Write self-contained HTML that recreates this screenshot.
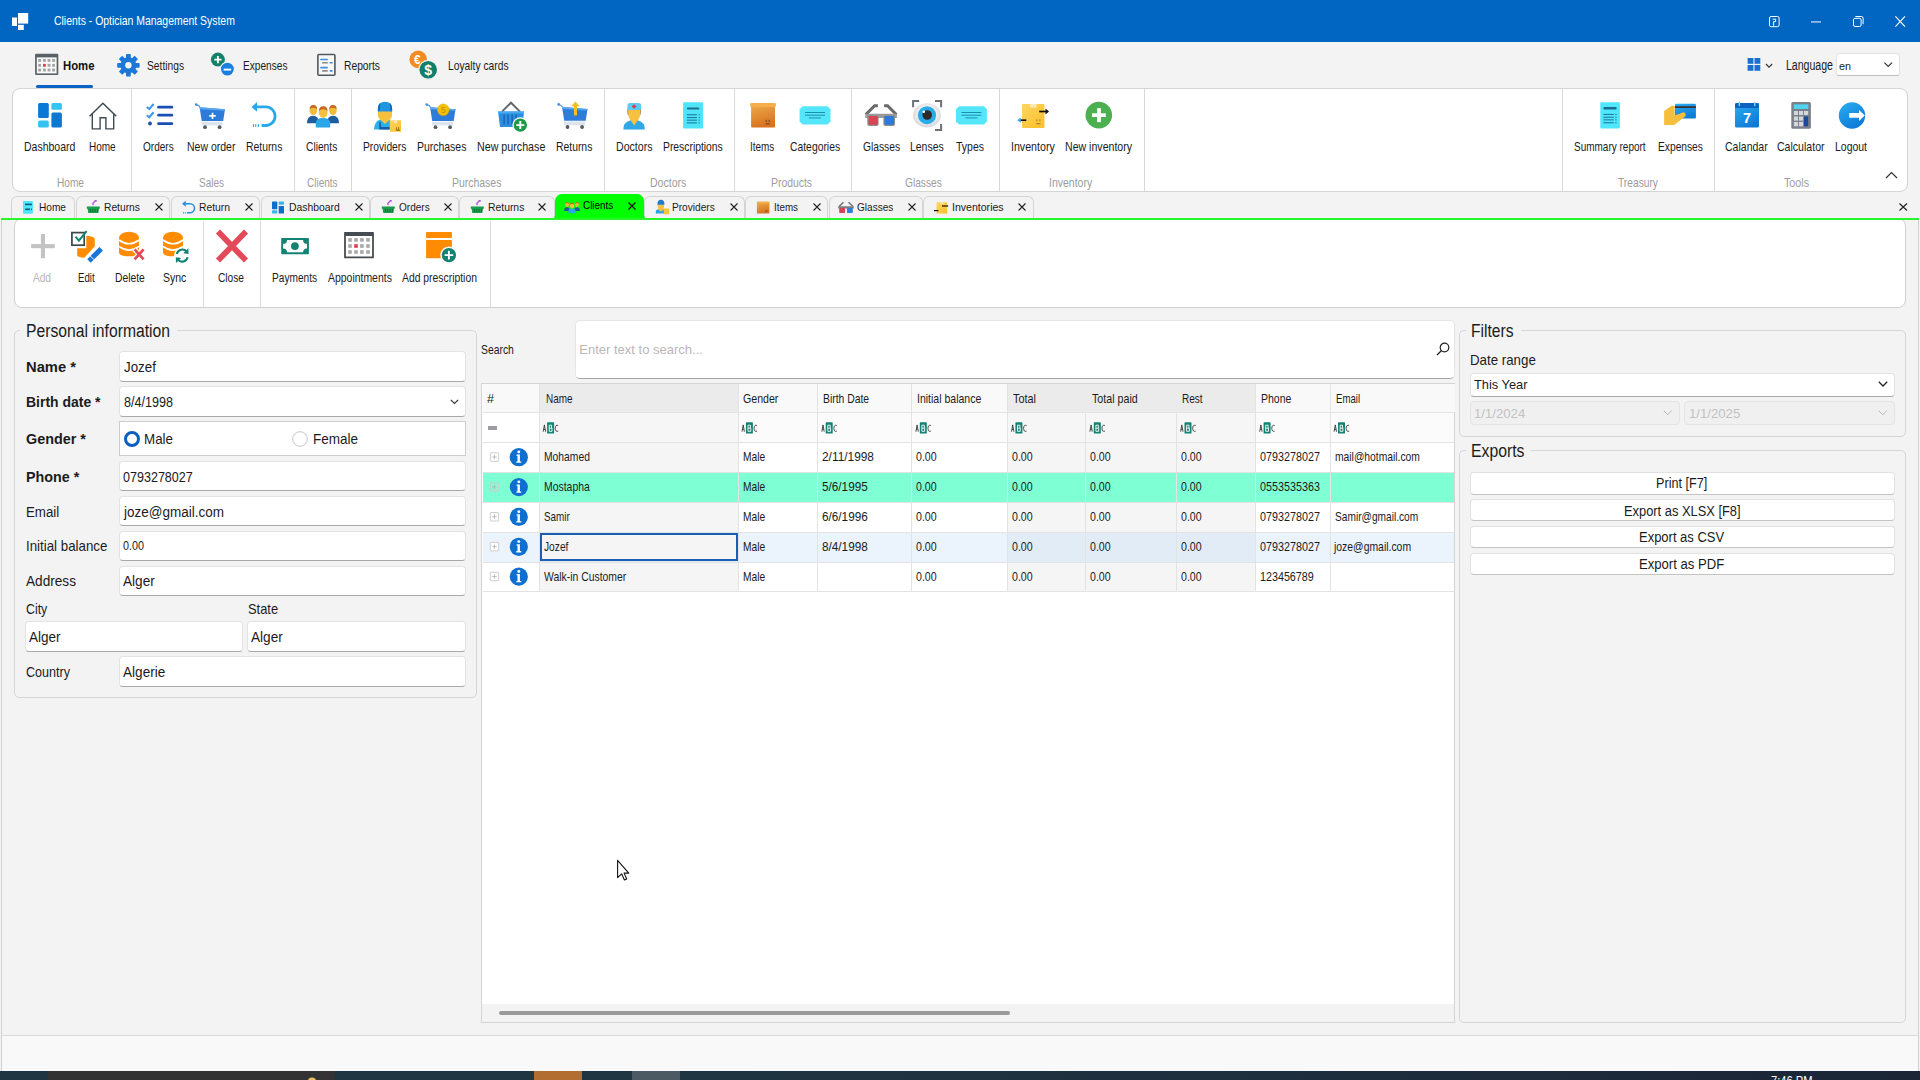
<!DOCTYPE html>
<html><head><meta charset="utf-8"><title>Clients - Optician Management System</title>
<style>
html,body{margin:0;padding:0;width:1920px;height:1080px;overflow:hidden;background:#f3f3f3;font-family:"Liberation Sans",sans-serif}
.t{position:absolute;white-space:nowrap;transform-origin:0 0}
.r{position:absolute;box-sizing:border-box}
svg.r{overflow:visible}
</style></head><body>
<div class="r" style="left:0.00px;top:0.00px;width:1920.00px;height:42.00px;background:#0066c2"></div>
<svg class="r" style="left:12.00px;top:13.00px" width="17" height="17" viewBox="0 0 17 17"><rect x="6" y="0" width="10.2" height="10.6" fill="#fff"/><rect x="0" y="4.5" width="5" height="8.5" fill="#fff"/><rect x="6" y="11.8" width="5.8" height="5.2" fill="#fff"/></svg>
<div class="t" style="left:53.50px;top:14.27px;font-size:13.50px;line-height:13.50px;color:#ffffff;transform:scaleX(0.7724)">Clients - Optician Management System</div>
<svg class="r" style="left:1769.00px;top:16.00px" width="11" height="11" viewBox="0 0 11 11"><rect x="0.5" y="0.5" width="9.6" height="10.2" rx="1.6" fill="none" stroke="#fff" stroke-width="1"/><path d="M3.6 3.2 H6.6 V5.6 H4.6 V9.8" fill="none" stroke="#fff" stroke-width="1"/></svg>
<svg class="r" style="left:1811.00px;top:21.00px" width="11" height="2" viewBox="0 0 11 2"><rect x="0" y="0.4" width="10" height="1.1" fill="#e8eef8"/></svg>
<svg class="r" style="left:1853.00px;top:16.00px" width="11" height="11" viewBox="0 0 11 11"><rect x="0.5" y="2.3" width="7.6" height="8.2" rx="1.5" fill="none" stroke="#fff"/><path d="M2.4 0.5 H8.5 a1.6 1.6 0 0 1 1.6 1.6 V8.2" fill="none" stroke="#fff"/></svg>
<svg class="r" style="left:1895.00px;top:16.00px" width="11" height="11" viewBox="0 0 11 11"><path d="M0.4 0.4 L10 10.6 M10 0.4 L0.4 10.6" stroke="#fff" stroke-width="1.1"/></svg>
<div class="r" style="left:0.00px;top:42.00px;width:1920.00px;height:46.00px;background:#f3f3f3"></div>
<div class="r" style="left:36.00px;top:85.00px;width:57.00px;height:3.00px;background:#0a63c4;border-radius:2px"></div>
<div class="t" style="left:62.50px;top:58.57px;font-size:13.50px;line-height:13.50px;color:#111111;font-weight:bold;transform:scaleX(0.8393)">Home</div>
<div class="t" style="left:147.00px;top:58.57px;font-size:13.50px;line-height:13.50px;color:#1b1b1b;transform:scaleX(0.7592)">Settings</div>
<div class="t" style="left:242.50px;top:58.57px;font-size:13.50px;line-height:13.50px;color:#1b1b1b;transform:scaleX(0.7509)">Expenses</div>
<div class="t" style="left:344.00px;top:58.57px;font-size:13.50px;line-height:13.50px;color:#1b1b1b;transform:scaleX(0.7619)">Reports</div>
<div class="t" style="left:447.50px;top:58.57px;font-size:13.50px;line-height:13.50px;color:#1b1b1b;transform:scaleX(0.7609)">Loyalty cards</div>
<div class="t" style="left:1786.00px;top:57.75px;font-size:14.00px;line-height:14.00px;color:#1b1b1b;transform:scaleX(0.7544)">Language</div>
<div class="r" style="left:1836.00px;top:53.00px;width:64.00px;height:23.00px;background:#ffffff;border:1px solid #e2e2e2;border-radius:3px;border-bottom-color:#bdbdbd"></div>
<div class="t" style="left:1839.00px;top:60.71px;font-size:10.50px;line-height:10.50px;color:#1b1b1b;transform:scaleX(1.0296)">en</div>
<div class="r" style="left:12.00px;top:88.00px;width:1896.00px;height:104.00px;background:#ffffff;border:1px solid #d4d4d4;border-radius:8px"></div>
<div class="r" style="left:130.80px;top:89.00px;width:1.00px;height:102.00px;background:#d9d9d9"></div>
<div class="r" style="left:294.00px;top:89.00px;width:1.00px;height:102.00px;background:#d9d9d9"></div>
<div class="r" style="left:350.80px;top:89.00px;width:1.00px;height:102.00px;background:#d9d9d9"></div>
<div class="r" style="left:604.00px;top:89.00px;width:1.00px;height:102.00px;background:#d9d9d9"></div>
<div class="r" style="left:734.20px;top:89.00px;width:1.00px;height:102.00px;background:#d9d9d9"></div>
<div class="r" style="left:851.00px;top:89.00px;width:1.00px;height:102.00px;background:#d9d9d9"></div>
<div class="r" style="left:998.60px;top:89.00px;width:1.00px;height:102.00px;background:#d9d9d9"></div>
<div class="r" style="left:1143.80px;top:89.00px;width:1.00px;height:102.00px;background:#d9d9d9"></div>
<div class="r" style="left:1562.00px;top:89.00px;width:1.00px;height:102.00px;background:#d9d9d9"></div>
<div class="r" style="left:1714.00px;top:89.00px;width:1.00px;height:102.00px;background:#d9d9d9"></div>
<div class="t" style="left:24.00px;top:140.00px;font-size:13.00px;line-height:13.00px;color:#1b1b1b;transform:scaleX(0.8070)">Dashboard</div>
<div class="t" style="left:89.30px;top:140.00px;font-size:13.00px;line-height:13.00px;color:#1b1b1b;transform:scaleX(0.7692)">Home</div>
<div class="t" style="left:143.30px;top:140.00px;font-size:13.00px;line-height:13.00px;color:#1b1b1b;transform:scaleX(0.7717)">Orders</div>
<div class="t" style="left:187.30px;top:140.00px;font-size:13.00px;line-height:13.00px;color:#1b1b1b;transform:scaleX(0.8076)">New order</div>
<div class="t" style="left:246.00px;top:140.00px;font-size:13.00px;line-height:13.00px;color:#1b1b1b;transform:scaleX(0.7978)">Returns</div>
<div class="t" style="left:306.00px;top:140.00px;font-size:13.00px;line-height:13.00px;color:#1b1b1b;transform:scaleX(0.7868)">Clients</div>
<div class="t" style="left:362.70px;top:140.00px;font-size:13.00px;line-height:13.00px;color:#1b1b1b;transform:scaleX(0.7893)">Providers</div>
<div class="t" style="left:416.70px;top:140.00px;font-size:13.00px;line-height:13.00px;color:#1b1b1b;transform:scaleX(0.8035)">Purchases</div>
<div class="t" style="left:476.70px;top:140.00px;font-size:13.00px;line-height:13.00px;color:#1b1b1b;transform:scaleX(0.8222)">New purchase</div>
<div class="t" style="left:556.00px;top:140.00px;font-size:13.00px;line-height:13.00px;color:#1b1b1b;transform:scaleX(0.7978)">Returns</div>
<div class="t" style="left:616.00px;top:140.00px;font-size:13.00px;line-height:13.00px;color:#1b1b1b;transform:scaleX(0.8138)">Doctors</div>
<div class="t" style="left:662.70px;top:140.00px;font-size:13.00px;line-height:13.00px;color:#1b1b1b;transform:scaleX(0.7958)">Prescriptions</div>
<div class="t" style="left:750.20px;top:140.00px;font-size:13.00px;line-height:13.00px;color:#1b1b1b;transform:scaleX(0.7629)">Items</div>
<div class="t" style="left:789.60px;top:140.00px;font-size:13.00px;line-height:13.00px;color:#1b1b1b;transform:scaleX(0.7970)">Categories</div>
<div class="t" style="left:862.50px;top:140.00px;font-size:13.00px;line-height:13.00px;color:#1b1b1b;transform:scaleX(0.7884)">Glasses</div>
<div class="t" style="left:910.00px;top:140.00px;font-size:13.00px;line-height:13.00px;color:#1b1b1b;transform:scaleX(0.8027)">Lenses</div>
<div class="t" style="left:956.40px;top:140.00px;font-size:13.00px;line-height:13.00px;color:#1b1b1b;transform:scaleX(0.8067)">Types</div>
<div class="t" style="left:1010.70px;top:140.00px;font-size:13.00px;line-height:13.00px;color:#1b1b1b;transform:scaleX(0.8179)">Inventory</div>
<div class="t" style="left:1065.20px;top:140.00px;font-size:13.00px;line-height:13.00px;color:#1b1b1b;transform:scaleX(0.8141)">New inventory</div>
<div class="t" style="left:1574.40px;top:140.00px;font-size:13.00px;line-height:13.00px;color:#1b1b1b;transform:scaleX(0.7682)">Summary report</div>
<div class="t" style="left:1657.50px;top:140.00px;font-size:13.00px;line-height:13.00px;color:#1b1b1b;transform:scaleX(0.7868)">Expenses</div>
<div class="t" style="left:1725.30px;top:140.00px;font-size:13.00px;line-height:13.00px;color:#1b1b1b;transform:scaleX(0.8090)">Calandar</div>
<div class="t" style="left:1777.40px;top:140.00px;font-size:13.00px;line-height:13.00px;color:#1b1b1b;transform:scaleX(0.8120)">Calculator</div>
<div class="t" style="left:1835.00px;top:140.00px;font-size:13.00px;line-height:13.00px;color:#1b1b1b;transform:scaleX(0.8044)">Logout</div>
<div class="t" style="left:57.30px;top:175.80px;font-size:13.00px;line-height:13.00px;color:#9d9d9d;transform:scaleX(0.7779)">Home</div>
<div class="t" style="left:199.30px;top:175.80px;font-size:13.00px;line-height:13.00px;color:#9d9d9d;transform:scaleX(0.7692)">Sales</div>
<div class="t" style="left:306.70px;top:175.80px;font-size:13.00px;line-height:13.00px;color:#9d9d9d;transform:scaleX(0.7692)">Clients</div>
<div class="t" style="left:452.00px;top:175.80px;font-size:13.00px;line-height:13.00px;color:#9d9d9d;transform:scaleX(0.8035)">Purchases</div>
<div class="t" style="left:650.20px;top:175.80px;font-size:13.00px;line-height:13.00px;color:#9d9d9d;transform:scaleX(0.8116)">Doctors</div>
<div class="t" style="left:771.20px;top:175.80px;font-size:13.00px;line-height:13.00px;color:#9d9d9d;transform:scaleX(0.8004)">Products</div>
<div class="t" style="left:905.40px;top:175.80px;font-size:13.00px;line-height:13.00px;color:#9d9d9d;transform:scaleX(0.7820)">Glasses</div>
<div class="t" style="left:1049.20px;top:175.80px;font-size:13.00px;line-height:13.00px;color:#9d9d9d;transform:scaleX(0.8067)">Inventory</div>
<div class="t" style="left:1617.50px;top:175.80px;font-size:13.00px;line-height:13.00px;color:#9d9d9d;transform:scaleX(0.7869)">Treasury</div>
<div class="t" style="left:1784.00px;top:175.80px;font-size:13.00px;line-height:13.00px;color:#9d9d9d;transform:scaleX(0.8254)">Tools</div>
<svg class="r" style="left:1885.00px;top:171.00px" width="13" height="8" viewBox="0 0 13 8"><path d="M1 7 L6.5 1.5 L12 7" fill="none" stroke="#333" stroke-width="1.2"/></svg>
<div class="r" style="left:0.00px;top:192.00px;width:1920.00px;height:26.00px;background:#f3f3f3"></div>
<div class="r" style="left:10.70px;top:196.00px;width:64.70px;height:23.00px;background:#f3f3f3;border:1px solid #d4d4d4;border-radius:6px 6px 0 0;border-bottom:none"></div>
<div class="t" style="left:39.00px;top:201.57px;font-size:11.50px;line-height:11.50px;color:#1b1b1b;transform:scaleX(0.8793)">Home</div>
<div class="r" style="left:76.00px;top:196.00px;width:94.30px;height:23.00px;background:#f3f3f3;border:1px solid #d4d4d4;border-radius:6px 6px 0 0;border-bottom:none"></div>
<div class="t" style="left:104.40px;top:201.57px;font-size:11.50px;line-height:11.50px;color:#1b1b1b;transform:scaleX(0.8919)">Returns</div>
<svg class="r" style="left:154.70px;top:202.50px" width="8" height="8" viewBox="0 0 8 8"><path d="M0.5 0.5 L7.5 7.5 M7.5 0.5 L0.5 7.5" stroke="#222" stroke-width="1.1"/></svg>
<div class="r" style="left:171.00px;top:196.00px;width:89.30px;height:23.00px;background:#f3f3f3;border:1px solid #d4d4d4;border-radius:6px 6px 0 0;border-bottom:none"></div>
<div class="t" style="left:199.30px;top:201.57px;font-size:11.50px;line-height:11.50px;color:#1b1b1b;transform:scaleX(0.8971)">Return</div>
<svg class="r" style="left:244.70px;top:202.50px" width="8" height="8" viewBox="0 0 8 8"><path d="M0.5 0.5 L7.5 7.5 M7.5 0.5 L0.5 7.5" stroke="#222" stroke-width="1.1"/></svg>
<div class="r" style="left:261.00px;top:196.00px;width:109.00px;height:23.00px;background:#f3f3f3;border:1px solid #d4d4d4;border-radius:6px 6px 0 0;border-bottom:none"></div>
<div class="t" style="left:289.30px;top:201.57px;font-size:11.50px;line-height:11.50px;color:#1b1b1b;transform:scaleX(0.9016)">Dashboard</div>
<svg class="r" style="left:354.60px;top:202.50px" width="8" height="8" viewBox="0 0 8 8"><path d="M0.5 0.5 L7.5 7.5 M7.5 0.5 L0.5 7.5" stroke="#222" stroke-width="1.1"/></svg>
<div class="r" style="left:370.00px;top:196.00px;width:89.00px;height:23.00px;background:#f3f3f3;border:1px solid #d4d4d4;border-radius:6px 6px 0 0;border-bottom:none"></div>
<div class="t" style="left:398.70px;top:201.57px;font-size:11.50px;line-height:11.50px;color:#1b1b1b;transform:scaleX(0.8724)">Orders</div>
<svg class="r" style="left:443.70px;top:202.50px" width="8" height="8" viewBox="0 0 8 8"><path d="M0.5 0.5 L7.5 7.5 M7.5 0.5 L0.5 7.5" stroke="#222" stroke-width="1.1"/></svg>
<div class="r" style="left:459.00px;top:196.00px;width:95.70px;height:23.00px;background:#f3f3f3;border:1px solid #d4d4d4;border-radius:6px 6px 0 0;border-bottom:none"></div>
<div class="t" style="left:488.00px;top:201.57px;font-size:11.50px;line-height:11.50px;color:#1b1b1b;transform:scaleX(0.9019)">Returns</div>
<svg class="r" style="left:538.40px;top:202.50px" width="8" height="8" viewBox="0 0 8 8"><path d="M0.5 0.5 L7.5 7.5 M7.5 0.5 L0.5 7.5" stroke="#222" stroke-width="1.1"/></svg>
<div class="r" style="left:643.75px;top:196.00px;width:101.45px;height:23.00px;background:#f3f3f3;border:1px solid #d4d4d4;border-radius:6px 6px 0 0;border-bottom:none"></div>
<div class="t" style="left:672.30px;top:201.57px;font-size:11.50px;line-height:11.50px;color:#1b1b1b;transform:scaleX(0.8799)">Providers</div>
<svg class="r" style="left:729.60px;top:202.50px" width="8" height="8" viewBox="0 0 8 8"><path d="M0.5 0.5 L7.5 7.5 M7.5 0.5 L0.5 7.5" stroke="#222" stroke-width="1.1"/></svg>
<div class="r" style="left:745.20px;top:196.00px;width:83.30px;height:23.00px;background:#f3f3f3;border:1px solid #d4d4d4;border-radius:6px 6px 0 0;border-bottom:none"></div>
<div class="t" style="left:774.40px;top:201.57px;font-size:11.50px;line-height:11.50px;color:#1b1b1b;transform:scaleX(0.8517)">Items</div>
<svg class="r" style="left:812.50px;top:202.50px" width="8" height="8" viewBox="0 0 8 8"><path d="M0.5 0.5 L7.5 7.5 M7.5 0.5 L0.5 7.5" stroke="#222" stroke-width="1.1"/></svg>
<div class="r" style="left:828.50px;top:196.00px;width:94.80px;height:23.00px;background:#f3f3f3;border:1px solid #d4d4d4;border-radius:6px 6px 0 0;border-bottom:none"></div>
<div class="t" style="left:856.70px;top:201.57px;font-size:11.50px;line-height:11.50px;color:#1b1b1b;transform:scaleX(0.8744)">Glasses</div>
<svg class="r" style="left:907.70px;top:202.50px" width="8" height="8" viewBox="0 0 8 8"><path d="M0.5 0.5 L7.5 7.5 M7.5 0.5 L0.5 7.5" stroke="#222" stroke-width="1.1"/></svg>
<div class="r" style="left:923.30px;top:196.00px;width:110.45px;height:23.00px;background:#f3f3f3;border:1px solid #d4d4d4;border-radius:6px 6px 0 0;border-bottom:none"></div>
<div class="t" style="left:951.90px;top:201.57px;font-size:11.50px;line-height:11.50px;color:#1b1b1b;transform:scaleX(0.9176)">Inventories</div>
<svg class="r" style="left:1017.50px;top:202.50px" width="8" height="8" viewBox="0 0 8 8"><path d="M0.5 0.5 L7.5 7.5 M7.5 0.5 L0.5 7.5" stroke="#222" stroke-width="1.1"/></svg>
<div class="r" style="left:555.00px;top:193.50px;width:89.00px;height:25.50px;background:#00ff00;border-radius:7px 7px 0 0"></div>
<svg class="r" style="left:550.00px;top:213.00px" width="100" height="7" viewBox="0 0 100 7"><path d="M0 6.5 Q5 6.5 5 1.5 V6.5 Z M99.5 6.5 Q94 6.5 94 1.5 V6.5 Z" fill="#00ff00"/></svg>
<div class="t" style="left:583.00px;top:200.47px;font-size:11.50px;line-height:11.50px;color:#000000;transform:scaleX(0.8582)">Clients</div>
<svg class="r" style="left:627.80px;top:201.50px" width="8" height="8" viewBox="0 0 8 8"><path d="M0.5 0.5 L7.5 7.5 M7.5 0.5 L0.5 7.5" stroke="#111" stroke-width="1.3"/></svg>
<svg class="r" style="left:1899.00px;top:202.50px" width="9" height="8" viewBox="0 0 9 8"><path d="M0.5 0.5 L8 7.5 M8 0.5 L0.5 7.5" stroke="#222" stroke-width="1.2"/></svg>
<div class="r" style="left:0.00px;top:220.00px;width:1920.00px;height:851.00px;background:#f3f3f3"></div>
<div class="r" style="left:1.00px;top:220.00px;width:1.00px;height:851.00px;background:#d0d0d0"></div>
<div class="r" style="left:1918.00px;top:220.00px;width:1.00px;height:851.00px;background:#d0d0d0"></div>
<div class="r" style="left:14.00px;top:218.00px;width:1892.00px;height:90.00px;background:#ffffff;border:1px solid #d0d0d0;border-radius:8px"></div>
<div class="r" style="left:1.00px;top:217.80px;width:1918.00px;height:1.90px;background:#2af52a"></div>
<div class="r" style="left:203.00px;top:221.00px;width:1.00px;height:86.00px;background:#d9d9d9"></div>
<div class="r" style="left:260.00px;top:221.00px;width:1.00px;height:86.00px;background:#d9d9d9"></div>
<div class="r" style="left:489.50px;top:221.00px;width:1.00px;height:86.00px;background:#d9d9d9"></div>
<div class="t" style="left:33.20px;top:271.40px;font-size:13.00px;line-height:13.00px;color:#b5b5b5;transform:scaleX(0.7779)">Add</div>
<div class="t" style="left:78.30px;top:271.40px;font-size:13.00px;line-height:13.00px;color:#1b1b1b;transform:scaleX(0.7426)">Edit</div>
<div class="t" style="left:115.40px;top:271.40px;font-size:13.00px;line-height:13.00px;color:#1b1b1b;transform:scaleX(0.7932)">Delete</div>
<div class="t" style="left:163.20px;top:271.40px;font-size:13.00px;line-height:13.00px;color:#1b1b1b;transform:scaleX(0.8073)">Sync</div>
<div class="t" style="left:218.40px;top:271.40px;font-size:13.00px;line-height:13.00px;color:#1b1b1b;transform:scaleX(0.7812)">Close</div>
<div class="t" style="left:272.10px;top:271.40px;font-size:13.00px;line-height:13.00px;color:#1b1b1b;transform:scaleX(0.7796)">Payments</div>
<div class="t" style="left:327.60px;top:271.40px;font-size:13.00px;line-height:13.00px;color:#1b1b1b;transform:scaleX(0.8032)">Appointments</div>
<div class="t" style="left:402.30px;top:271.40px;font-size:13.00px;line-height:13.00px;color:#1b1b1b;transform:scaleX(0.7980)">Add prescription</div>
<div class="r" style="left:14.00px;top:330.00px;width:463.00px;height:368.00px;background:transparent;border:1px solid #d6d6d6;border-radius:5px"></div>
<div class="r" style="left:20.00px;top:322.00px;width:157.00px;height:18.00px;background:#f3f3f3"></div>
<div class="t" style="left:26.25px;top:321.66px;font-size:18.00px;line-height:18.00px;color:#1b1b1b;transform:scaleX(0.8724)">Personal information</div>
<div class="r" style="left:119.00px;top:351.00px;width:347.00px;height:31.00px;background:#ffffff;border:1px solid #e3e3e3;border-radius:4px;border-bottom:1.5px solid #a9a9a9"></div>
<div class="r" style="left:119.00px;top:386.00px;width:347.00px;height:31.00px;background:#ffffff;border:1px solid #e3e3e3;border-radius:4px;border-bottom:1.5px solid #a9a9a9"></div>
<div class="r" style="left:119.00px;top:421.00px;width:347.00px;height:35.00px;background:#ffffff;border:1px solid #cdcdcd"></div>
<div class="r" style="left:119.00px;top:461.00px;width:347.00px;height:30.00px;background:#ffffff;border:1px solid #e3e3e3;border-radius:4px;border-bottom:1.5px solid #a9a9a9"></div>
<div class="r" style="left:119.00px;top:496.00px;width:347.00px;height:30.00px;background:#ffffff;border:1px solid #e3e3e3;border-radius:4px;border-bottom:1.5px solid #a9a9a9"></div>
<div class="r" style="left:119.00px;top:531.00px;width:347.00px;height:30.00px;background:#ffffff;border:1px solid #e3e3e3;border-radius:4px;border-bottom:1.5px solid #a9a9a9"></div>
<div class="r" style="left:119.00px;top:566.00px;width:347.00px;height:30.00px;background:#ffffff;border:1px solid #e3e3e3;border-radius:4px;border-bottom:1.5px solid #a9a9a9"></div>
<div class="r" style="left:25.00px;top:621.00px;width:218.00px;height:31.00px;background:#ffffff;border:1px solid #e3e3e3;border-radius:4px;border-bottom:1.5px solid #a9a9a9"></div>
<div class="r" style="left:247.00px;top:621.00px;width:219.00px;height:31.00px;background:#ffffff;border:1px solid #e3e3e3;border-radius:4px;border-bottom:1.5px solid #a9a9a9"></div>
<div class="r" style="left:119.00px;top:656.00px;width:347.00px;height:31.00px;background:#ffffff;border:1px solid #e3e3e3;border-radius:4px;border-bottom:1.5px solid #a9a9a9"></div>
<div class="t" style="left:25.60px;top:358.78px;font-size:15.50px;line-height:15.50px;color:#1b1b1b;font-weight:bold;transform:scaleX(0.9516)">Name *</div>
<div class="t" style="left:25.60px;top:393.78px;font-size:15.50px;line-height:15.50px;color:#1b1b1b;font-weight:bold;transform:scaleX(0.9006)">Birth date *</div>
<div class="t" style="left:25.50px;top:431.00px;font-size:15.00px;line-height:15.00px;color:#1b1b1b;font-weight:bold;transform:scaleX(0.9592)">Gender *</div>
<div class="t" style="left:25.50px;top:468.80px;font-size:15.00px;line-height:15.00px;color:#1b1b1b;font-weight:bold;transform:scaleX(0.9543)">Phone *</div>
<div class="t" style="left:25.50px;top:503.63px;font-size:15.50px;line-height:15.50px;color:#1b1b1b;transform:scaleX(0.8581)">Email</div>
<div class="t" style="left:25.50px;top:538.98px;font-size:14.50px;line-height:14.50px;color:#1b1b1b;transform:scaleX(0.9171)">Initial balance</div>
<div class="t" style="left:25.50px;top:573.98px;font-size:14.50px;line-height:14.50px;color:#1b1b1b;transform:scaleX(0.9396)">Address</div>
<div class="t" style="left:25.50px;top:602.23px;font-size:14.50px;line-height:14.50px;color:#1b1b1b;transform:scaleX(0.8520)">City</div>
<div class="t" style="left:247.50px;top:602.23px;font-size:14.50px;line-height:14.50px;color:#1b1b1b;transform:scaleX(0.8880)">State</div>
<div class="t" style="left:25.50px;top:664.73px;font-size:14.50px;line-height:14.50px;color:#1b1b1b;transform:scaleX(0.8670)">Country</div>
<div class="t" style="left:123.75px;top:358.78px;font-size:15.50px;line-height:15.50px;color:#1b1b1b;transform:scaleX(0.8598)">Jozef</div>
<div class="t" style="left:123.50px;top:393.78px;font-size:15.50px;line-height:15.50px;color:#1b1b1b;transform:scaleX(0.8127)">8/4/1998</div>
<svg class="r" style="left:450.00px;top:398.50px" width="9" height="6" viewBox="0 0 9 6"><path d="M0.8 0.8 L4.5 4.5 L8.2 0.8" fill="none" stroke="#333" stroke-width="1.2"/></svg>
<div class="t" style="left:144.25px;top:431.00px;font-size:15.00px;line-height:15.00px;color:#1b1b1b;transform:scaleX(0.8909)">Male</div>
<div class="t" style="left:312.50px;top:431.00px;font-size:15.00px;line-height:15.00px;color:#1b1b1b;transform:scaleX(0.9009)">Female</div>
<svg class="r" style="left:124.00px;top:431.00px" width="16" height="16" viewBox="0 0 16 16"><circle cx="8" cy="8" r="6.5" fill="#fff" stroke="#0a5fc2" stroke-width="3"/></svg>
<svg class="r" style="left:292.00px;top:431.00px" width="16" height="16" viewBox="0 0 16 16"><circle cx="8" cy="8" r="7.3" fill="#fff" stroke="#c8c8c8" stroke-width="1"/></svg>
<div class="t" style="left:123.25px;top:468.80px;font-size:15.00px;line-height:15.00px;color:#1b1b1b;transform:scaleX(0.8363)">0793278027</div>
<div class="t" style="left:123.66px;top:503.63px;font-size:15.50px;line-height:15.50px;color:#1b1b1b;transform:scaleX(0.8715)">joze@gmail.com</div>
<div class="t" style="left:123.25px;top:539.32px;font-size:13.50px;line-height:13.50px;color:#1b1b1b;transform:scaleX(0.7977)">0.00</div>
<div class="t" style="left:123.25px;top:573.98px;font-size:14.50px;line-height:14.50px;color:#1b1b1b;transform:scaleX(0.9398)">Alger</div>
<div class="t" style="left:29.25px;top:629.73px;font-size:14.50px;line-height:14.50px;color:#1b1b1b;transform:scaleX(0.9324)">Alger</div>
<div class="t" style="left:251.25px;top:629.73px;font-size:14.50px;line-height:14.50px;color:#1b1b1b;transform:scaleX(0.9398)">Alger</div>
<div class="t" style="left:123.25px;top:664.73px;font-size:14.50px;line-height:14.50px;color:#1b1b1b;transform:scaleX(0.9369)">Algerie</div>
<div class="t" style="left:481.10px;top:343.00px;font-size:13.00px;line-height:13.00px;color:#1b1b1b;transform:scaleX(0.7983)">Search</div>
<div class="r" style="left:575.00px;top:320.00px;width:880.00px;height:59.00px;background:#ffffff;border:1px solid #e6e6e6;border-radius:5px;border-bottom:1.5px solid #a5a5a5"></div>
<div class="t" style="left:579.30px;top:343.00px;font-size:13.00px;line-height:13.00px;color:#bcb6b6">Enter text to search...</div>
<svg class="r" style="left:1436.00px;top:342.00px" width="14" height="14" viewBox="0 0 14 14"><circle cx="8.5" cy="5.5" r="4.3" fill="none" stroke="#222" stroke-width="1.2"/><path d="M5.3 8.7 L1 13" stroke="#222" stroke-width="1.3"/></svg>
<div class="r" style="left:481.00px;top:383.00px;width:974.00px;height:640.00px;background:#ffffff;border:1px solid #d4d4d4"></div>
<div class="r" style="left:482.50px;top:384.30px;width:57.30px;height:28.20px;background:#f9f9f9"></div>
<div class="r" style="left:538.80px;top:384.30px;width:200.20px;height:28.20px;background:#ebebeb"></div>
<div class="r" style="left:738.00px;top:384.30px;width:79.70px;height:28.20px;background:#f9f9f9"></div>
<div class="r" style="left:816.70px;top:384.30px;width:95.00px;height:28.20px;background:#f9f9f9"></div>
<div class="r" style="left:910.70px;top:384.30px;width:97.00px;height:28.20px;background:#f9f9f9"></div>
<div class="r" style="left:1006.70px;top:384.30px;width:79.40px;height:28.20px;background:#ebebeb"></div>
<div class="r" style="left:1085.10px;top:384.30px;width:91.80px;height:28.20px;background:#ebebeb"></div>
<div class="r" style="left:1175.90px;top:384.30px;width:80.00px;height:28.20px;background:#ebebeb"></div>
<div class="r" style="left:1254.90px;top:384.30px;width:76.10px;height:28.20px;background:#f9f9f9"></div>
<div class="r" style="left:1330.00px;top:384.30px;width:124.50px;height:28.20px;background:#f9f9f9"></div>
<div class="r" style="left:482.50px;top:412.50px;width:56.80px;height:29.90px;background:#ffffff"></div>
<div class="r" style="left:539.80px;top:412.50px;width:198.70px;height:29.90px;background:#f6f6f6"></div>
<div class="r" style="left:739.00px;top:412.50px;width:78.20px;height:29.90px;background:#fbfbfb"></div>
<div class="r" style="left:817.70px;top:412.50px;width:93.50px;height:29.90px;background:#fbfbfb"></div>
<div class="r" style="left:911.70px;top:412.50px;width:95.50px;height:29.90px;background:#fbfbfb"></div>
<div class="r" style="left:1007.70px;top:412.50px;width:77.90px;height:29.90px;background:#f6f6f6"></div>
<div class="r" style="left:1086.10px;top:412.50px;width:90.30px;height:29.90px;background:#f6f6f6"></div>
<div class="r" style="left:1176.90px;top:412.50px;width:78.50px;height:29.90px;background:#f6f6f6"></div>
<div class="r" style="left:1255.90px;top:412.50px;width:74.60px;height:29.90px;background:#fbfbfb"></div>
<div class="r" style="left:1331.00px;top:412.50px;width:123.00px;height:29.90px;background:#fbfbfb"></div>
<div class="r" style="left:482.50px;top:442.40px;width:56.80px;height:30.10px;background:#ffffff"></div>
<div class="r" style="left:539.80px;top:442.40px;width:198.70px;height:30.10px;background:#f5f5f5"></div>
<div class="r" style="left:739.00px;top:442.40px;width:78.20px;height:30.10px;background:#ffffff"></div>
<div class="r" style="left:817.70px;top:442.40px;width:93.50px;height:30.10px;background:#ffffff"></div>
<div class="r" style="left:911.70px;top:442.40px;width:95.50px;height:30.10px;background:#ffffff"></div>
<div class="r" style="left:1007.70px;top:442.40px;width:77.90px;height:30.10px;background:#f5f5f5"></div>
<div class="r" style="left:1086.10px;top:442.40px;width:90.30px;height:30.10px;background:#f5f5f5"></div>
<div class="r" style="left:1176.90px;top:442.40px;width:78.50px;height:30.10px;background:#f5f5f5"></div>
<div class="r" style="left:1255.90px;top:442.40px;width:74.60px;height:30.10px;background:#ffffff"></div>
<div class="r" style="left:1331.00px;top:442.40px;width:123.00px;height:30.10px;background:#ffffff"></div>
<div class="r" style="left:482.50px;top:472.50px;width:56.80px;height:29.70px;background:#7fffd4"></div>
<div class="r" style="left:539.80px;top:472.50px;width:198.70px;height:29.70px;background:#7fffd4"></div>
<div class="r" style="left:739.00px;top:472.50px;width:78.20px;height:29.70px;background:#7fffd4"></div>
<div class="r" style="left:817.70px;top:472.50px;width:93.50px;height:29.70px;background:#7fffd4"></div>
<div class="r" style="left:911.70px;top:472.50px;width:95.50px;height:29.70px;background:#7fffd4"></div>
<div class="r" style="left:1007.70px;top:472.50px;width:77.90px;height:29.70px;background:#7fffd4"></div>
<div class="r" style="left:1086.10px;top:472.50px;width:90.30px;height:29.70px;background:#7fffd4"></div>
<div class="r" style="left:1176.90px;top:472.50px;width:78.50px;height:29.70px;background:#7fffd4"></div>
<div class="r" style="left:1255.90px;top:472.50px;width:74.60px;height:29.70px;background:#7fffd4"></div>
<div class="r" style="left:1331.00px;top:472.50px;width:123.00px;height:29.70px;background:#7fffd4"></div>
<div class="r" style="left:482.50px;top:502.20px;width:56.80px;height:29.90px;background:#ffffff"></div>
<div class="r" style="left:539.80px;top:502.20px;width:198.70px;height:29.90px;background:#f5f5f5"></div>
<div class="r" style="left:739.00px;top:502.20px;width:78.20px;height:29.90px;background:#ffffff"></div>
<div class="r" style="left:817.70px;top:502.20px;width:93.50px;height:29.90px;background:#ffffff"></div>
<div class="r" style="left:911.70px;top:502.20px;width:95.50px;height:29.90px;background:#ffffff"></div>
<div class="r" style="left:1007.70px;top:502.20px;width:77.90px;height:29.90px;background:#f5f5f5"></div>
<div class="r" style="left:1086.10px;top:502.20px;width:90.30px;height:29.90px;background:#f5f5f5"></div>
<div class="r" style="left:1176.90px;top:502.20px;width:78.50px;height:29.90px;background:#f5f5f5"></div>
<div class="r" style="left:1255.90px;top:502.20px;width:74.60px;height:29.90px;background:#ffffff"></div>
<div class="r" style="left:1331.00px;top:502.20px;width:123.00px;height:29.90px;background:#ffffff"></div>
<div class="r" style="left:482.50px;top:532.10px;width:56.80px;height:29.90px;background:#ebf3fc"></div>
<div class="r" style="left:539.80px;top:532.10px;width:198.70px;height:29.90px;background:#e2ecf7"></div>
<div class="r" style="left:739.00px;top:532.10px;width:78.20px;height:29.90px;background:#ebf3fc"></div>
<div class="r" style="left:817.70px;top:532.10px;width:93.50px;height:29.90px;background:#ebf3fc"></div>
<div class="r" style="left:911.70px;top:532.10px;width:95.50px;height:29.90px;background:#ebf3fc"></div>
<div class="r" style="left:1007.70px;top:532.10px;width:77.90px;height:29.90px;background:#e2ecf7"></div>
<div class="r" style="left:1086.10px;top:532.10px;width:90.30px;height:29.90px;background:#e2ecf7"></div>
<div class="r" style="left:1176.90px;top:532.10px;width:78.50px;height:29.90px;background:#e2ecf7"></div>
<div class="r" style="left:1255.90px;top:532.10px;width:74.60px;height:29.90px;background:#ebf3fc"></div>
<div class="r" style="left:1331.00px;top:532.10px;width:123.00px;height:29.90px;background:#ebf3fc"></div>
<div class="r" style="left:482.50px;top:562.00px;width:56.80px;height:29.70px;background:#ffffff"></div>
<div class="r" style="left:539.80px;top:562.00px;width:198.70px;height:29.70px;background:#f5f5f5"></div>
<div class="r" style="left:739.00px;top:562.00px;width:78.20px;height:29.70px;background:#ffffff"></div>
<div class="r" style="left:817.70px;top:562.00px;width:93.50px;height:29.70px;background:#ffffff"></div>
<div class="r" style="left:911.70px;top:562.00px;width:95.50px;height:29.70px;background:#ffffff"></div>
<div class="r" style="left:1007.70px;top:562.00px;width:77.90px;height:29.70px;background:#f5f5f5"></div>
<div class="r" style="left:1086.10px;top:562.00px;width:90.30px;height:29.70px;background:#f5f5f5"></div>
<div class="r" style="left:1176.90px;top:562.00px;width:78.50px;height:29.70px;background:#f5f5f5"></div>
<div class="r" style="left:1255.90px;top:562.00px;width:74.60px;height:29.70px;background:#ffffff"></div>
<div class="r" style="left:1331.00px;top:562.00px;width:123.00px;height:29.70px;background:#ffffff"></div>
<div class="r" style="left:538.80px;top:384.30px;width:1.00px;height:207.40px;background:#e3e3e3"></div>
<div class="r" style="left:738.00px;top:384.30px;width:1.00px;height:207.40px;background:#e3e3e3"></div>
<div class="r" style="left:816.70px;top:384.30px;width:1.00px;height:207.40px;background:#e3e3e3"></div>
<div class="r" style="left:910.70px;top:384.30px;width:1.00px;height:207.40px;background:#e3e3e3"></div>
<div class="r" style="left:1006.70px;top:384.30px;width:1.00px;height:207.40px;background:#e3e3e3"></div>
<div class="r" style="left:1085.10px;top:412.50px;width:1.00px;height:179.20px;background:#e3e3e3"></div>
<div class="r" style="left:1175.90px;top:412.50px;width:1.00px;height:179.20px;background:#e3e3e3"></div>
<div class="r" style="left:1254.90px;top:384.30px;width:1.00px;height:207.40px;background:#e3e3e3"></div>
<div class="r" style="left:1330.00px;top:384.30px;width:1.00px;height:207.40px;background:#e3e3e3"></div>
<div class="r" style="left:482.50px;top:412.00px;width:971.00px;height:1.00px;background:#e3e3e3"></div>
<div class="r" style="left:482.50px;top:441.90px;width:971.00px;height:1.00px;background:#e3e3e3"></div>
<div class="r" style="left:482.50px;top:472.00px;width:971.00px;height:1.00px;background:#e3e3e3"></div>
<div class="r" style="left:482.50px;top:501.70px;width:971.00px;height:1.00px;background:#e3e3e3"></div>
<div class="r" style="left:482.50px;top:531.60px;width:971.00px;height:1.00px;background:#e3e3e3"></div>
<div class="r" style="left:482.50px;top:561.50px;width:971.00px;height:1.00px;background:#e3e3e3"></div>
<div class="r" style="left:482.50px;top:591.20px;width:971.00px;height:1.00px;background:#e3e3e3"></div>
<div class="r" style="left:540.40px;top:532.90px;width:197.40px;height:28.50px;background:#f5f5f5;border:2px solid #1a5fb4"></div>
<div class="t" style="left:486.70px;top:391.97px;font-size:13.50px;line-height:13.50px;color:#1b1b1b;transform:scaleX(0.9259)">#</div>
<div class="t" style="left:545.60px;top:391.97px;font-size:13.50px;line-height:13.50px;color:#1b1b1b;transform:scaleX(0.7380)">Name</div>
<div class="t" style="left:743.20px;top:391.97px;font-size:13.50px;line-height:13.50px;color:#1b1b1b;transform:scaleX(0.7851)">Gender</div>
<div class="t" style="left:823.30px;top:391.97px;font-size:13.50px;line-height:13.50px;color:#1b1b1b;transform:scaleX(0.7674)">Birth Date</div>
<div class="t" style="left:917.00px;top:391.97px;font-size:13.50px;line-height:13.50px;color:#1b1b1b;transform:scaleX(0.7783)">Initial balance</div>
<div class="t" style="left:1013.10px;top:391.97px;font-size:13.50px;line-height:13.50px;color:#1b1b1b;transform:scaleX(0.8039)">Total</div>
<div class="t" style="left:1091.50px;top:391.97px;font-size:13.50px;line-height:13.50px;color:#1b1b1b;transform:scaleX(0.7909)">Total paid</div>
<div class="t" style="left:1182.30px;top:391.97px;font-size:13.50px;line-height:13.50px;color:#1b1b1b;transform:scaleX(0.7443)">Rest</div>
<div class="t" style="left:1261.00px;top:391.97px;font-size:13.50px;line-height:13.50px;color:#1b1b1b;transform:scaleX(0.7766)">Phone</div>
<div class="t" style="left:1336.20px;top:391.97px;font-size:13.50px;line-height:13.50px;color:#1b1b1b;transform:scaleX(0.7141)">Email</div>
<div class="t" style="left:544.30px;top:450.37px;font-size:13.50px;line-height:13.50px;color:#1b1b1b;transform:scaleX(0.7640)">Mohamed</div>
<div class="t" style="left:743.20px;top:450.37px;font-size:13.50px;line-height:13.50px;color:#1b1b1b;transform:scaleX(0.7578)">Male</div>
<div class="t" style="left:822.00px;top:450.37px;font-size:13.50px;line-height:13.50px;color:#1b1b1b;transform:scaleX(0.8797)">2/11/1998</div>
<div class="t" style="left:916.00px;top:450.37px;font-size:13.50px;line-height:13.50px;color:#1b1b1b;transform:scaleX(0.7863)">0.00</div>
<div class="t" style="left:1012.30px;top:450.37px;font-size:13.50px;line-height:13.50px;color:#1b1b1b;transform:scaleX(0.7863)">0.00</div>
<div class="t" style="left:1090.20px;top:450.37px;font-size:13.50px;line-height:13.50px;color:#1b1b1b;transform:scaleX(0.7863)">0.00</div>
<div class="t" style="left:1181.00px;top:450.37px;font-size:13.50px;line-height:13.50px;color:#1b1b1b;transform:scaleX(0.7863)">0.00</div>
<div class="t" style="left:1260.20px;top:450.37px;font-size:13.50px;line-height:13.50px;color:#1b1b1b;transform:scaleX(0.7980)">0793278027</div>
<div class="t" style="left:1334.60px;top:450.37px;font-size:13.50px;line-height:13.50px;color:#1b1b1b;transform:scaleX(0.7632)">mail@hotmail.com</div>
<div class="t" style="left:544.30px;top:480.47px;font-size:13.50px;line-height:13.50px;color:#1b1b1b;transform:scaleX(0.7727)">Mostapha</div>
<div class="t" style="left:743.20px;top:480.47px;font-size:13.50px;line-height:13.50px;color:#1b1b1b;transform:scaleX(0.7578)">Male</div>
<div class="t" style="left:822.00px;top:480.47px;font-size:13.50px;line-height:13.50px;color:#1b1b1b;transform:scaleX(0.8702)">5/6/1995</div>
<div class="t" style="left:916.00px;top:480.47px;font-size:13.50px;line-height:13.50px;color:#1b1b1b;transform:scaleX(0.7863)">0.00</div>
<div class="t" style="left:1012.30px;top:480.47px;font-size:13.50px;line-height:13.50px;color:#1b1b1b;transform:scaleX(0.7863)">0.00</div>
<div class="t" style="left:1090.20px;top:480.47px;font-size:13.50px;line-height:13.50px;color:#1b1b1b;transform:scaleX(0.7863)">0.00</div>
<div class="t" style="left:1181.00px;top:480.47px;font-size:13.50px;line-height:13.50px;color:#1b1b1b;transform:scaleX(0.7863)">0.00</div>
<div class="t" style="left:1260.20px;top:480.47px;font-size:13.50px;line-height:13.50px;color:#1b1b1b;transform:scaleX(0.7980)">0553535363</div>
<div class="t" style="left:544.30px;top:510.17px;font-size:13.50px;line-height:13.50px;color:#1b1b1b;transform:scaleX(0.7294)">Samir</div>
<div class="t" style="left:743.20px;top:510.17px;font-size:13.50px;line-height:13.50px;color:#1b1b1b;transform:scaleX(0.7578)">Male</div>
<div class="t" style="left:822.00px;top:510.17px;font-size:13.50px;line-height:13.50px;color:#1b1b1b;transform:scaleX(0.8702)">6/6/1996</div>
<div class="t" style="left:916.00px;top:510.17px;font-size:13.50px;line-height:13.50px;color:#1b1b1b;transform:scaleX(0.7863)">0.00</div>
<div class="t" style="left:1012.30px;top:510.17px;font-size:13.50px;line-height:13.50px;color:#1b1b1b;transform:scaleX(0.7863)">0.00</div>
<div class="t" style="left:1090.20px;top:510.17px;font-size:13.50px;line-height:13.50px;color:#1b1b1b;transform:scaleX(0.7863)">0.00</div>
<div class="t" style="left:1181.00px;top:510.17px;font-size:13.50px;line-height:13.50px;color:#1b1b1b;transform:scaleX(0.7863)">0.00</div>
<div class="t" style="left:1260.20px;top:510.17px;font-size:13.50px;line-height:13.50px;color:#1b1b1b;transform:scaleX(0.7980)">0793278027</div>
<div class="t" style="left:1335.40px;top:510.17px;font-size:13.50px;line-height:13.50px;color:#1b1b1b;transform:scaleX(0.7534)">Samir@gmail.com</div>
<div class="t" style="left:543.80px;top:540.07px;font-size:13.50px;line-height:13.50px;color:#1b1b1b;transform:scaleX(0.7562)">Jozef</div>
<div class="t" style="left:743.20px;top:540.07px;font-size:13.50px;line-height:13.50px;color:#1b1b1b;transform:scaleX(0.7578)">Male</div>
<div class="t" style="left:822.00px;top:540.07px;font-size:13.50px;line-height:13.50px;color:#1b1b1b;transform:scaleX(0.8702)">8/4/1998</div>
<div class="t" style="left:916.00px;top:540.07px;font-size:13.50px;line-height:13.50px;color:#1b1b1b;transform:scaleX(0.7863)">0.00</div>
<div class="t" style="left:1012.30px;top:540.07px;font-size:13.50px;line-height:13.50px;color:#1b1b1b;transform:scaleX(0.7863)">0.00</div>
<div class="t" style="left:1090.20px;top:540.07px;font-size:13.50px;line-height:13.50px;color:#1b1b1b;transform:scaleX(0.7863)">0.00</div>
<div class="t" style="left:1181.00px;top:540.07px;font-size:13.50px;line-height:13.50px;color:#1b1b1b;transform:scaleX(0.7863)">0.00</div>
<div class="t" style="left:1260.20px;top:540.07px;font-size:13.50px;line-height:13.50px;color:#1b1b1b;transform:scaleX(0.7980)">0793278027</div>
<div class="t" style="left:1334.41px;top:540.07px;font-size:13.50px;line-height:13.50px;color:#1b1b1b;transform:scaleX(0.7706)">joze@gmail.com</div>
<div class="t" style="left:544.30px;top:569.97px;font-size:13.50px;line-height:13.50px;color:#1b1b1b;transform:scaleX(0.7707)">Walk-in Customer</div>
<div class="t" style="left:743.20px;top:569.97px;font-size:13.50px;line-height:13.50px;color:#1b1b1b;transform:scaleX(0.7578)">Male</div>
<div class="t" style="left:916.00px;top:569.97px;font-size:13.50px;line-height:13.50px;color:#1b1b1b;transform:scaleX(0.7863)">0.00</div>
<div class="t" style="left:1012.30px;top:569.97px;font-size:13.50px;line-height:13.50px;color:#1b1b1b;transform:scaleX(0.7863)">0.00</div>
<div class="t" style="left:1090.20px;top:569.97px;font-size:13.50px;line-height:13.50px;color:#1b1b1b;transform:scaleX(0.7863)">0.00</div>
<div class="t" style="left:1181.00px;top:569.97px;font-size:13.50px;line-height:13.50px;color:#1b1b1b;transform:scaleX(0.7863)">0.00</div>
<div class="t" style="left:1260.20px;top:569.97px;font-size:13.50px;line-height:13.50px;color:#1b1b1b;transform:scaleX(0.7956)">123456789</div>
<div class="r" style="left:482.00px;top:1004.00px;width:972.00px;height:18.00px;background:#f3f3f3"></div>
<div class="r" style="left:498.70px;top:1011.40px;width:511.50px;height:3.80px;background:#9a9a9a;border-radius:2px"></div>
<div class="r" style="left:1459.00px;top:330.00px;width:447.00px;height:107.00px;background:transparent;border:1px solid #d6d6d6;border-radius:5px"></div>
<div class="r" style="left:1466.00px;top:322.00px;width:55.00px;height:18.00px;background:#f3f3f3"></div>
<div class="t" style="left:1470.80px;top:321.54px;font-size:18.50px;line-height:18.50px;color:#1b1b1b;transform:scaleX(0.8426)">Filters</div>
<div class="t" style="left:1470.40px;top:351.90px;font-size:15.00px;line-height:15.00px;color:#1b1b1b;transform:scaleX(0.8862)">Date range</div>
<div class="r" style="left:1470.00px;top:373.00px;width:425.00px;height:24.00px;background:#ffffff;border:1px solid #e3e3e3;border-radius:4px;border-bottom:1.5px solid #a9a9a9"></div>
<div class="t" style="left:1474.40px;top:378.00px;font-size:13.00px;line-height:13.00px;color:#1b1b1b;transform:scaleX(0.9851)">This Year</div>
<svg class="r" style="left:1878.00px;top:381.00px" width="10" height="7" viewBox="0 0 10 7"><path d="M0.8 0.8 L5 5 L9.2 0.8" fill="none" stroke="#222" stroke-width="1.3"/></svg>
<div class="r" style="left:1470.00px;top:401.00px;width:210.00px;height:24.00px;background:#f0f0f0;border:1px solid #e4e4e4;border-radius:4px"></div>
<div class="r" style="left:1684.00px;top:401.00px;width:211.00px;height:24.00px;background:#f0f0f0;border:1px solid #e4e4e4;border-radius:4px"></div>
<div class="t" style="left:1474.40px;top:406.87px;font-size:13.50px;line-height:13.50px;color:#c2c2c2;transform:scaleX(0.9750)">1/1/2024</div>
<div class="t" style="left:1688.50px;top:406.87px;font-size:13.50px;line-height:13.50px;color:#c2c2c2;transform:scaleX(0.9750)">1/1/2025</div>
<svg class="r" style="left:1663.00px;top:410.00px" width="10" height="6" viewBox="0 0 10 6"><path d="M0.8 0.8 L4.7 4.7 L8.6 0.8" fill="none" stroke="#b5b5b5" stroke-width="1"/></svg>
<svg class="r" style="left:1878.00px;top:410.00px" width="10" height="6" viewBox="0 0 10 6"><path d="M0.8 0.8 L4.7 4.7 L8.6 0.8" fill="none" stroke="#b5b5b5" stroke-width="1"/></svg>
<div class="r" style="left:1459.00px;top:450.00px;width:447.00px;height:573.00px;background:transparent;border:1px solid #d6d6d6;border-radius:5px"></div>
<div class="r" style="left:1466.00px;top:442.00px;width:65.00px;height:18.00px;background:#f3f3f3"></div>
<div class="t" style="left:1470.60px;top:442.69px;font-size:17.50px;line-height:17.50px;color:#1b1b1b;transform:scaleX(0.9001)">Exports</div>
<div class="r" style="left:1470.00px;top:472.00px;width:425.00px;height:23.00px;background:#ffffff;border:1px solid #e2e2e2;border-radius:4px;border-bottom-color:#c4c4c4"></div>
<div class="t" style="left:1656.00px;top:475.48px;font-size:15.50px;line-height:15.50px;color:#1b1b1b;transform:scaleX(0.8152)">Print [F7]</div>
<div class="r" style="left:1470.00px;top:499.00px;width:425.00px;height:22.00px;background:#ffffff;border:1px solid #e2e2e2;border-radius:4px;border-bottom-color:#c4c4c4"></div>
<div class="t" style="left:1624.00px;top:502.58px;font-size:15.50px;line-height:15.50px;color:#1b1b1b;transform:scaleX(0.8303)">Export as XLSX [F8]</div>
<div class="r" style="left:1470.00px;top:526.00px;width:425.00px;height:22.00px;background:#ffffff;border:1px solid #e2e2e2;border-radius:4px;border-bottom-color:#c4c4c4"></div>
<div class="t" style="left:1639.40px;top:529.18px;font-size:15.50px;line-height:15.50px;color:#1b1b1b;transform:scaleX(0.8369)">Export as CSV</div>
<div class="r" style="left:1470.00px;top:553.00px;width:425.00px;height:22.00px;background:#ffffff;border:1px solid #e2e2e2;border-radius:4px;border-bottom-color:#c4c4c4"></div>
<div class="t" style="left:1639.40px;top:556.08px;font-size:15.50px;line-height:15.50px;color:#1b1b1b;transform:scaleX(0.8447)">Export as PDF</div>
<div class="r" style="left:2.00px;top:1035.00px;width:1916.00px;height:36.00px;background:#f9f9f9;border-top:1px solid #d9d9d9"></div>
<div class="r" style="left:0.00px;top:1071.00px;width:1920.00px;height:9.00px;background:linear-gradient(90deg,#1f3541 0%,#1f3541 36%,#1d2c3c 75%,#1b2536 100%)"></div>
<div class="r" style="left:48.00px;top:1071.00px;width:287.00px;height:9.00px;background:#333333"></div>
<div class="r" style="left:534.00px;top:1071.00px;width:48.00px;height:9.00px;background:#b26d31"></div>
<div class="r" style="left:632.00px;top:1071.00px;width:48.00px;height:9.00px;background:#4b5a63"></div>
<svg class="r" style="left:305.00px;top:1073.00px" width="14" height="8" viewBox="0 0 14 8"><circle cx="7" cy="9" r="4.5" fill="#e8c060"/></svg>
<div class="t" style="left:1771.00px;top:1073.73px;font-size:14.50px;line-height:14.50px;color:#ffffff;transform:scaleX(0.7694)">7:46 PM</div>
<svg style="position:absolute;left:0;top:0" width="1920" height="1080" viewBox="0 0 1920 1080"><defs><linearGradient id="gbox" x1="0" y1="0" x2="0.3" y2="1"><stop offset="0" stop-color="#eca648"/><stop offset="1" stop-color="#d8731f"/></linearGradient><linearGradient id="gyel" x1="0" y1="0" x2="1" y2="1"><stop offset="0" stop-color="#fdd660"/><stop offset="1" stop-color="#fbbf2a"/></linearGradient><linearGradient id="gblue" x1="0" y1="0" x2="0.6" y2="1"><stop offset="0" stop-color="#2aaff0"/><stop offset="1" stop-color="#0e7ad8"/></linearGradient></defs>
<rect x="35.10" y="53.80" width="23.20" height="21.30" rx="1" fill="#596066" />
<rect x="36.80" y="57.40" width="19.80" height="16.00" rx="0" fill="#fafafa" />
<rect x="38.15" y="58.95" width="2.90" height="2.90" rx="0" fill="#a3a5a7" />
<rect x="38.15" y="63.85" width="2.90" height="2.90" rx="0" fill="#a3a5a7" />
<rect x="38.15" y="68.55" width="2.90" height="2.90" rx="0" fill="#a3a5a7" />
<rect x="42.95" y="58.95" width="2.90" height="2.90" rx="0" fill="#a3a5a7" />
<rect x="42.95" y="63.85" width="2.90" height="2.90" rx="0" fill="#e8404e" />
<rect x="42.95" y="68.55" width="2.90" height="2.90" rx="0" fill="#a3a5a7" />
<rect x="47.55" y="58.95" width="2.90" height="2.90" rx="0" fill="#a3a5a7" />
<rect x="47.55" y="63.85" width="2.90" height="2.90" rx="0" fill="#a3a5a7" />
<rect x="47.55" y="68.55" width="2.90" height="2.90" rx="0" fill="#a3a5a7" />
<rect x="52.15" y="58.95" width="2.90" height="2.90" rx="0" fill="#a3a5a7" />
<rect x="52.15" y="63.85" width="2.90" height="2.90" rx="0" fill="#a3a5a7" />
<rect x="52.15" y="68.55" width="2.90" height="2.90" rx="0" fill="#a3a5a7" />
<g transform="translate(128.4 65.3)"><rect x="-2.4" y="-11.2" width="4.8" height="5" rx="0.8" fill="#1b78d8" transform="rotate(0)"/><rect x="-2.4" y="-11.2" width="4.8" height="5" rx="0.8" fill="#1b78d8" transform="rotate(45)"/><rect x="-2.4" y="-11.2" width="4.8" height="5" rx="0.8" fill="#1b78d8" transform="rotate(90)"/><rect x="-2.4" y="-11.2" width="4.8" height="5" rx="0.8" fill="#1b78d8" transform="rotate(135)"/><rect x="-2.4" y="-11.2" width="4.8" height="5" rx="0.8" fill="#1b78d8" transform="rotate(180)"/><rect x="-2.4" y="-11.2" width="4.8" height="5" rx="0.8" fill="#1b78d8" transform="rotate(225)"/><rect x="-2.4" y="-11.2" width="4.8" height="5" rx="0.8" fill="#1b78d8" transform="rotate(270)"/><rect x="-2.4" y="-11.2" width="4.8" height="5" rx="0.8" fill="#1b78d8" transform="rotate(315)"/><circle r="8" fill="#1b78d8"/><circle r="3.2" fill="#f3f3f3"/></g>
<circle cx="227.40" cy="69.10" r="7.60" fill="#f3f3f3" />
<circle cx="217.90" cy="59.60" r="7.00" fill="#148068" />
<circle cx="227.40" cy="69.10" r="7.00" fill="#1a7ee0" stroke="#f3f3f3" stroke-width="1.2"/>
<path d="M214.3 59.6 H221.5 M217.9 56 V63.2" fill="none" stroke="#fff" stroke-width="1.9"/>
<path d="M223.6 69.6 H231.2" fill="none" stroke="#fff" stroke-width="1.9"/>
<rect x="317.90" y="54.50" width="17.00" height="20.80" rx="1" fill="#f8f8f8" stroke="#50575c" stroke-width="1.6"/>
<rect x="320.20" y="58.70" width="7.70" height="1.60" rx="0.6" fill="#3d8fe0" />
<rect x="322.00" y="62.00" width="5.90" height="1.60" rx="0.6" fill="#8a8c8e" /><rect x="329.60" y="62.00" width="3.10" height="1.60" rx="0.6" fill="#3d8fe0" />
<rect x="320.20" y="66.80" width="7.70" height="1.60" rx="0.6" fill="#3d8fe0" />
<rect x="322.00" y="70.10" width="5.90" height="1.60" rx="0.6" fill="#8a8c8e" /><rect x="329.60" y="70.10" width="3.10" height="1.60" rx="0.6" fill="#3d8fe0" />
<circle cx="418.20" cy="59.40" r="8.80" fill="#f28b20" />
<text x="417.3" y="63.8" font-size="12" font-weight="bold" fill="#fff" font-family="Liberation Sans" text-anchor="middle">€</text>
<circle cx="428.20" cy="69.80" r="9.40" fill="#127e6c" stroke="#f3f3f3" stroke-width="1.2"/>
<text x="428.2" y="75" font-size="14" font-weight="bold" fill="#fff" font-family="Liberation Sans" text-anchor="middle">$</text>
<rect x="1747.60" y="58.00" width="5.80" height="5.80" rx="0" fill="#1a6fd0" /><rect x="1754.50" y="58.00" width="5.80" height="5.80" rx="0" fill="#1a6fd0" /><rect x="1747.60" y="65.00" width="5.80" height="5.80" rx="0" fill="#1a6fd0" /><rect x="1754.50" y="65.00" width="5.80" height="5.80" rx="0" fill="#1a6fd0" />
<path d="M1766 64 L1769 67.2 L1772.2 64" fill="none" stroke="#333" stroke-width="1.1"/>
<path d="M1884.4 62.6 L1888.2 66.4 L1892 62.6" fill="none" stroke="#333" stroke-width="1.2"/>
<rect x="38.10" y="103.00" width="10.70" height="14.90" rx="1.5" fill="#0b78d6" /><rect x="51.40" y="103.00" width="10.50" height="6.80" rx="1.5" fill="#36c2f2" /><rect x="38.10" y="120.50" width="10.70" height="7.00" rx="1.5" fill="#36c2f2" /><rect x="51.40" y="112.60" width="10.50" height="14.90" rx="1.5" fill="#0b78d6" />
<path d="M89.6 116.3 L102.9 103.3 L116.3 116.3" fill="none" stroke="#3f4a52" stroke-width="1.5"/>
<path d="M92.3 114 V128.9 H100.1 V117.8 H105.9 V128.9 H113.7 V114" fill="none" stroke="#3f4a52" stroke-width="1.4"/>
<path d="M146.8 107 L149.3 109 L153.6 104" fill="none" stroke="#3d9be9" stroke-width="2.1"/>
<path d="M146.8 115.2 L149.3 117.2 L153.6 112.2" fill="none" stroke="#3d9be9" stroke-width="2.1"/>
<circle cx="150.00" cy="123.50" r="1.90" fill="#1b4fb4" />
<rect x="157.20" y="105.80" width="16.00" height="2.70" rx="1.2" fill="#1b4fb4" /><rect x="157.20" y="113.80" width="16.00" height="2.70" rx="1.2" fill="#1b4fb4" /><rect x="157.20" y="122.20" width="16.00" height="2.70" rx="1.2" fill="#1b4fb4" />
<g transform="translate(195.00 102.20) scale(1.0000)"><path d="M1.2 2.4 L4 3.6 L5 5.3" fill="none" stroke="#3f8fe0" stroke-width="1.1"/><circle cx="1.20" cy="2.40" r="1.30" fill="#3f8fe0" /><path d="M4.6 5 L30 7 L28.2 18.7 L6.7 18.7 Z" fill="#2f7bd9"/><path d="M4.6 5 L30 7 L29.8 8.6 L4.9 7 Z" fill="#55a8f0"/><rect x="6.50" y="19.50" width="21.00" height="3.70" rx="0" fill="#dce5ee" /><circle cx="10.00" cy="25.00" r="1.90" fill="#555b60" /><circle cx="24.60" cy="25.00" r="1.90" fill="#555b60" /><path d="M14.3 13.7 H20.7 M17.5 10.5 V16.9" fill="none" stroke="#fff" stroke-width="1.6"/></g>
<path d="M256 106.9 H265.8 A9.3 9.3 0 0 1 265.8 125.5 H261.6" fill="none" stroke="#28a8e8" stroke-width="2.8"/>
<path d="M251.5 106.9 L257 102 L257 111.8 Z" fill="#28a8e8"/>
<rect x="252.80" y="124.10" width="1.10" height="2.90" rx="0" fill="#28a8e8" /><rect x="255.20" y="124.10" width="1.10" height="2.90" rx="0" fill="#28a8e8" /><rect x="257.80" y="124.10" width="1.10" height="2.90" rx="0" fill="#28a8e8" />
<g transform="translate(307.00 104.30) scale(1.0000)"><path d="M0 19 Q0 11.5 6 11.5 Q12 11.5 12 19 Z" fill="#1f5c9e"/><path d="M20 19 Q20 11.5 26 11.5 Q32 11.5 32 19 Z" fill="#1f5c9e"/><ellipse cx="6.3" cy="6.2" rx="3.8" ry="4.6" fill="#f4bb3a"/><ellipse cx="25.9" cy="6.2" rx="3.8" ry="4.6" fill="#f4bb3a"/><path d="M2.6 5 Q3 0.6 6.4 0.8 Q10 0.8 10.1 5 Q8 3 6.3 3.4 Q4.3 3 2.6 5Z" fill="#c8661e"/><path d="M22.2 5 Q22.6 0.6 26 0.8 Q29.6 0.8 29.7 5 Q27.6 3 25.9 3.4 Q23.9 3 22.2 5Z" fill="#c8661e"/><path d="M8.8 23.3 L8.8 19 Q8.8 13.6 16 13.6 Q23.2 13.6 23.2 19 L23.2 23.3 Z" fill="#2aa6e8"/><ellipse cx="16.2" cy="8.3" rx="4.3" ry="5.3" fill="#f6c040"/><path d="M11.8 7 Q12 2 16.2 2 Q20.5 2 20.6 7 Q18.4 4.6 16.2 5 Q14 4.6 11.8 7Z" fill="#c8661e"/></g>
<path d="M374 129.4 Q374.5 121.6 379.5 119.8 L390 119.8 L390 129.4 Z" fill="#2ab0ec"/>
<path d="M379.3 122 L380.6 121.6 L381 127 L389.8 127 L389.8 129.4 L379.3 129.4 Z" fill="#1a5aa0"/>
<path d="M378 110.6 V115.4 Q378 117.3 379.8 119.3 L385 123.9 L390.2 119.3 Q392 117.3 392 115.4 V110.6 Z" fill="#f6c040"/>
<path d="M377.8 111.2 Q377.6 101.8 385 101.8 Q392.4 101.8 392.2 111.2 Z" fill="#2196e0"/>
<path d="M377.8 111.2 Q377.6 104 380.5 102.8 Q379.8 107 380 111.2 Z M392.2 111.2 Q392.4 104 389.5 102.8 Q390.2 107 390 111.2 Z" fill="#1866b8"/>
<rect x="378.00" y="110.20" width="14.00" height="1.10" rx="0" fill="#1e8cf0" />
<rect x="389.80" y="120.30" width="11.20" height="11.50" rx="0.6" fill="url(#gyel)" /><rect x="393.80" y="120.30" width="3.20" height="2.50" rx="0" fill="#fde9b8" /><rect x="396.20" y="127.20" width="0.70" height="2.40" rx="0" fill="#7a5a10" /><rect x="398.30" y="127.20" width="0.70" height="2.40" rx="0" fill="#7a5a10" /><rect x="396.00" y="129.60" width="4.00" height="1.00" rx="0" fill="#7a5a10" />
<g transform="translate(425.50 102.20) scale(1.0000)"><path d="M1.2 2.4 L4 3.6 L5 5.3" fill="none" stroke="#3f8fe0" stroke-width="1.1"/><circle cx="1.20" cy="2.40" r="1.30" fill="#3f8fe0" /><path d="M4.6 5 L30 7 L28.2 18.7 L6.7 18.7 Z" fill="#2f7bd9"/><path d="M4.6 5 L30 7 L29.8 8.6 L4.9 7 Z" fill="#55a8f0"/><rect x="6.50" y="19.50" width="21.00" height="3.70" rx="0" fill="#dce5ee" /><circle cx="10.00" cy="25.00" r="1.90" fill="#555b60" /><circle cx="24.60" cy="25.00" r="1.90" fill="#555b60" /></g>
<circle cx="443.30" cy="109.80" r="5.80" fill="#f2c200" stroke="#e5a800" stroke-width="0.6"/>
<text x="443.3" y="113.2" font-size="8.5" fill="#c98a00" font-family="Liberation Sans" text-anchor="middle">5</text>
<path d="M502 111.6 L511 102.7 L520 111.6" fill="none" stroke="#5f686e" stroke-width="2"/>
<path d="M498.1 111.4 L524 111.4 L522.5 127 L500 127 Z" fill="#2b8fe0"/>
<rect x="498.10" y="111.40" width="25.90" height="2.00" rx="0" fill="#4aa8f0" />
<rect x="503.50" y="114.50" width="1.20" height="10.00" rx="0" fill="#1a5aa8" />
<rect x="507.50" y="114.50" width="1.20" height="10.00" rx="0" fill="#1a5aa8" />
<rect x="511.50" y="114.50" width="1.20" height="10.00" rx="0" fill="#1a5aa8" />
<rect x="515.50" y="114.50" width="1.20" height="10.00" rx="0" fill="#1a5aa8" />
<circle cx="520.30" cy="125.10" r="7.30" fill="#1e9a4b" stroke="#fff" stroke-width="1.2"/>
<path d="M516.3 125.1 H524.3 M520.3 121.1 V129.1" fill="none" stroke="#fff" stroke-width="1.9"/>
<g transform="translate(557.50 102.00) scale(1.0000)"><path d="M1.2 2.4 L4 3.6 L5 5.3" fill="none" stroke="#3f8fe0" stroke-width="1.1"/><circle cx="1.20" cy="2.40" r="1.30" fill="#3f8fe0" /><path d="M4.6 5 L30 7 L28.2 18.7 L6.7 18.7 Z" fill="#2f7bd9"/><path d="M4.6 5 L30 7 L29.8 8.6 L4.9 7 Z" fill="#55a8f0"/><rect x="6.50" y="19.50" width="21.00" height="3.70" rx="0" fill="#dce5ee" /><circle cx="10.00" cy="25.00" r="1.90" fill="#555b60" /><circle cx="24.60" cy="25.00" r="1.90" fill="#555b60" /></g>
<path d="M575.4 101.6 L579.6 106.2 L571.2 106.2 Z" fill="#f6bf1e"/>
<rect x="573.90" y="105.80" width="3.10" height="9.60" rx="0" fill="#f6bf1e" />
<path d="M623.4 129.6 Q622.8 122.6 630.5 120.3 L637.8 120.3 Q645.4 122.6 644.8 129.6 Z" fill="#2ea8e6"/>
<path d="M627.3 110 L627.6 114.6 L628.8 115.6 L629 110 Z M640.9 110 L640.6 114.6 L639.4 115.6 L639.2 110 Z" fill="#b0642a"/>
<path d="M628.2 109.8 V114 Q628.2 117 630 119.4 L634.2 125.6 L638.4 119.4 Q640.2 117 640.2 114 V109.8 Z" fill="#f6c040"/>
<path d="M627.2 109.9 L627.6 104.6 Q627.9 102.9 630 102.9 L638.6 102.9 Q640.7 102.9 641 104.6 L641.3 109.9 Z" fill="#5ccaf2"/>
<path d="M634.1 104.6 V108.6 M632 106.5 H636.2" fill="none" stroke="#e0303e" stroke-width="1.4"/>
<rect x="683.10" y="102.30" width="20.00" height="26.20" rx="1" fill="#50e4fb" />
<rect x="686.90" y="107.40" width="12.50" height="2.20" rx="1" fill="#1a6e8e" />
<rect x="686.90" y="114.20" width="10.00" height="1.10" rx="0" fill="#1f7ea0" /><rect x="698.60" y="114.20" width="1.20" height="1.10" rx="0" fill="#1f7ea0" />
<rect x="686.90" y="117.00" width="10.00" height="1.10" rx="0" fill="#1f7ea0" /><rect x="698.60" y="117.00" width="1.20" height="1.10" rx="0" fill="#1f7ea0" />
<rect x="686.90" y="119.60" width="10.00" height="1.10" rx="0" fill="#1f7ea0" /><rect x="698.60" y="119.60" width="1.20" height="1.10" rx="0" fill="#1f7ea0" />
<rect x="686.90" y="122.30" width="10.00" height="1.10" rx="0" fill="#1f7ea0" /><rect x="698.60" y="122.30" width="1.20" height="1.10" rx="0" fill="#1f7ea0" />
<rect x="751.10" y="106.60" width="23.90" height="20.80" rx="1" fill="url(#gbox)" />
<rect x="750.20" y="103.00" width="25.70" height="3.90" rx="1" fill="#f4ae4c" />
<rect x="765.60" y="119.80" width="1.20" height="2.20" rx="0" fill="#7a4a20" /><rect x="768.60" y="119.80" width="1.20" height="2.20" rx="0" fill="#7a4a20" /><rect x="765.60" y="123.20" width="4.20" height="1.20" rx="0" fill="#7a4a20" />
<path d="M802.6 106.2 H827.5 L830.5 109.2 V121.4 L827.5 124.4 H802.6 L799.6 121.4 V109.2 Z" fill="#56e6fc"/>
<rect x="805.00" y="112.00" width="20.00" height="1.00" rx="0" fill="#1a8fae" /><rect x="805.00" y="114.70" width="20.00" height="1.00" rx="0" fill="#1a8fae" /><rect x="809.00" y="117.40" width="12.00" height="1.00" rx="0" fill="#1a8fae" />
<path d="M959.0 106.2 H983.9 L986.9 109.2 V121.4 L983.9 124.4 H959.0 L956.0 121.4 V109.2 Z" fill="#56e6fc"/>
<rect x="961.40" y="112.00" width="20.00" height="1.00" rx="0" fill="#1a8fae" /><rect x="961.40" y="114.70" width="20.00" height="1.00" rx="0" fill="#1a8fae" /><rect x="965.40" y="117.40" width="12.00" height="1.00" rx="0" fill="#1a8fae" />
<path d="M865.8 114.6 L874.6 105.8 H877.9 M896.4 114.6 L887.6 105.8 H884.1" fill="none" stroke="#6a6a6a" stroke-width="3"/>
<rect x="865.30" y="113.80" width="31.60" height="4.20" rx="0.5" fill="#9a9a9a" />
<rect x="867.30" y="115.50" width="11.30" height="10.60" rx="2" fill="#8c8c8c" /><rect x="883.40" y="115.50" width="11.60" height="10.60" rx="2" fill="#8c8c8c" />
<rect x="868.70" y="116.10" width="9.00" height="8.70" rx="1" fill="#d94452" /><rect x="884.50" y="116.10" width="9.50" height="8.70" rx="1" fill="#2f7ad6" />
<path d="M913.1 107.2 V101.1 H919.2 M935 101.1 H941.1 V107.2 M941.1 124 V130 H935" fill="none" stroke="#6b7278" stroke-width="2"/>
<defs><radialGradient id="geye" cx="0.5" cy="0.45" r="0.55"><stop offset="0.6" stop-color="#f0f0f0"/><stop offset="1" stop-color="#d4d6d8"/></radialGradient></defs>
<ellipse cx="927" cy="115.3" rx="14" ry="12.1" fill="url(#geye)"/>
<circle cx="927.00" cy="115.20" r="9.06" fill="#29abe8" /><circle cx="927.20" cy="115.00" r="4.80" fill="#2a2a2a" /><circle cx="923.80" cy="111.80" r="1.30" fill="#ffffff" />
<rect x="1021.90" y="104.10" width="22.50" height="23.80" rx="1" fill="url(#gyel)" />
<rect x="1030.00" y="104.10" width="6.60" height="3.50" rx="0" fill="#fde9b8" />
<rect x="1036.20" y="119.30" width="1.20" height="1.90" rx="0" fill="#b08a30" /><rect x="1039.20" y="119.30" width="1.20" height="1.90" rx="0" fill="#b08a30" /><rect x="1036.20" y="123.00" width="4.20" height="1.30" rx="0" fill="#b08a30" />
<path d="M1039.2 111.5 H1046.5" fill="none" stroke="#111" stroke-width="1.7"/><path d="M1045.5 108.6 L1049 111.5 L1045.5 114.4 Z" fill="#111"/>
<path d="M1020 120.2 H1026.3" fill="none" stroke="#111" stroke-width="1.7"/><path d="M1020.8 117.6 L1017.2 120.2 L1020.8 122.8 Z" fill="#3aaaf0"/>
<circle cx="1098.80" cy="115.10" r="13.30" fill="#4caf50" />
<rect x="1097.10" y="108.20" width="3.80" height="14.00" rx="0" fill="#fff" /><rect x="1092.00" y="113.30" width="13.80" height="3.70" rx="0" fill="#fff" />
<rect x="1600.30" y="102.30" width="19.60" height="26.20" rx="1" fill="#50e6fc" />
<rect x="1603.40" y="107.10" width="13.20" height="2.50" rx="1" fill="#1a6e8e" />
<rect x="1603.40" y="113.90" width="10.40" height="1.10" rx="0" fill="#1f7ea0" /><rect x="1615.20" y="113.90" width="1.40" height="1.10" rx="0" fill="#1f7ea0" />
<rect x="1603.40" y="116.70" width="10.40" height="1.10" rx="0" fill="#1f7ea0" /><rect x="1615.20" y="116.70" width="1.40" height="1.10" rx="0" fill="#1f7ea0" />
<rect x="1603.40" y="119.30" width="10.40" height="1.10" rx="0" fill="#1f7ea0" /><rect x="1615.20" y="119.30" width="1.40" height="1.10" rx="0" fill="#1f7ea0" />
<rect x="1603.40" y="122.20" width="10.40" height="1.10" rx="0" fill="#1f7ea0" /><rect x="1615.20" y="122.20" width="1.40" height="1.10" rx="0" fill="#1f7ea0" />
<rect x="1674.90" y="103.80" width="21.00" height="14.70" rx="1.2" fill="url(#gblue)" />
<rect x="1674.90" y="106.20" width="21.00" height="1.80" rx="0" fill="#3a3030" />
<path d="M1664.1 111 L1671.9 105.6 L1674.6 106 L1674.6 115.6 L1683.5 112.2 Q1686.5 112.6 1685.4 116.2 L1674.2 125.1 L1664.1 125.1 Z" fill="#f5bf3d"/>
<rect x="1735.00" y="103.00" width="24.00" height="24.60" rx="1.5" fill="url(#gblue)" />
<rect x="1735.00" y="103.00" width="24.00" height="5.10" rx="1.5" fill="#0b62c0" />
<rect x="1738.60" y="101.80" width="1.50" height="4.40" rx="0.6" fill="#70d8f8" /><rect x="1754.00" y="101.80" width="1.50" height="4.40" rx="0.6" fill="#70d8f8" />
<text x="1747.1" y="123.4" font-size="14.5" font-weight="bold" fill="#fff" font-family="Liberation Sans" text-anchor="middle">7</text>
<rect x="1791.30" y="101.90" width="19.60" height="26.90" rx="1.5" fill="#7b8189" />
<rect x="1793.80" y="104.40" width="14.60" height="4.50" rx="0" fill="#4ed6f6" />
<rect x="1793.90" y="111.00" width="4.10" height="4.00" rx="0" fill="#d3d7db" />
<rect x="1793.90" y="116.50" width="4.10" height="4.10" rx="0" fill="#d3d7db" />
<rect x="1793.90" y="122.00" width="4.10" height="4.30" rx="0" fill="#d3d7db" />
<rect x="1799.00" y="111.00" width="4.10" height="4.00" rx="0" fill="#d3d7db" />
<rect x="1799.00" y="116.50" width="4.10" height="4.10" rx="0" fill="#d3d7db" />
<rect x="1799.00" y="122.00" width="4.10" height="4.30" rx="0" fill="#d3d7db" />
<rect x="1804.00" y="111.00" width="4.20" height="4.00" rx="0" fill="#d3d7db" />
<rect x="1804.00" y="116.50" width="4.20" height="9.80" rx="0" fill="#1a4a9a" />
<circle cx="1852.00" cy="115.50" r="13.20" fill="url(#gblue)" />
<path d="M1849.2 113 H1859 V110 L1864.8 115.4 L1859 121 V117.8 H1849.2 Z" fill="#fff"/>
<rect x="23.00" y="201.00" width="9.90" height="12.70" rx="0.8" fill="#4ee6fc" /><rect x="25.10" y="203.60" width="6.80" height="1.60" rx="0" fill="#0a5a7a" /><rect x="25.10" y="208.50" width="4.90" height="1.60" rx="0" fill="#0a5a7a" /><rect x="31.00" y="208.50" width="0.90" height="1.60" rx="0" fill="#0a5a7a" />
<g transform="translate(86.80 199.40) scale(1.0000)"><path d="M0 7 L13 7 L13 9.3 L12.2 9.3 L11.5 13.5 L1.5 13.5 L0.8 9.3 L0 9.3 Z" fill="#1a9a4c"/><rect x="3.30" y="9.60" width="0.80" height="3.00" rx="0" fill="#0d6a30" /><rect x="5.60" y="9.60" width="0.80" height="3.00" rx="0" fill="#0d6a30" /><rect x="7.90" y="9.60" width="0.80" height="3.00" rx="0" fill="#0d6a30" /><rect x="10.20" y="9.60" width="0.80" height="3.00" rx="0" fill="#0d6a30" /><path d="M6.6 5.8 Q5.4 4.5 6.6 3.4 L8.6 1.5" fill="none" stroke="#b544de" stroke-width="1.2"/><path d="M7.5 0.6 L10 0.6 L9.5 2.8 Z" fill="#b544de"/></g>
<g transform="translate(381.80 199.40) scale(1.0000)"><path d="M0 7 L13 7 L13 9.3 L12.2 9.3 L11.5 13.5 L1.5 13.5 L0.8 9.3 L0 9.3 Z" fill="#1a9a4c"/><rect x="3.30" y="9.60" width="0.80" height="3.00" rx="0" fill="#0d6a30" /><rect x="5.60" y="9.60" width="0.80" height="3.00" rx="0" fill="#0d6a30" /><rect x="7.90" y="9.60" width="0.80" height="3.00" rx="0" fill="#0d6a30" /><rect x="10.20" y="9.60" width="0.80" height="3.00" rx="0" fill="#0d6a30" /><path d="M6.6 5.8 Q5.4 4.5 6.6 3.4 L8.6 1.5" fill="none" stroke="#b544de" stroke-width="1.2"/><path d="M7.5 0.6 L10 0.6 L9.5 2.8 Z" fill="#b544de"/></g>
<g transform="translate(470.80 199.40) scale(1.0000)"><path d="M0 7 L13 7 L13 9.3 L12.2 9.3 L11.5 13.5 L1.5 13.5 L0.8 9.3 L0 9.3 Z" fill="#1a9a4c"/><rect x="3.30" y="9.60" width="0.80" height="3.00" rx="0" fill="#0d6a30" /><rect x="5.60" y="9.60" width="0.80" height="3.00" rx="0" fill="#0d6a30" /><rect x="7.90" y="9.60" width="0.80" height="3.00" rx="0" fill="#0d6a30" /><rect x="10.20" y="9.60" width="0.80" height="3.00" rx="0" fill="#0d6a30" /><path d="M6.6 5.8 Q5.4 4.5 6.6 3.4 L8.6 1.5" fill="none" stroke="#b544de" stroke-width="1.2"/><path d="M7.5 0.6 L10 0.6 L9.5 2.8 Z" fill="#b544de"/></g>
<path d="M185 203.8 H190 A4.5 4.5 0 0 1 190 212.8 H187" fill="none" stroke="#2a90e0" stroke-width="1.6"/>
<path d="M182 203.8 L185.8 200.8 L185.8 206.8 Z" fill="#2a90e0"/>
<rect x="183.00" y="212.00" width="0.80" height="1.60" rx="0" fill="#2a90e0" /><rect x="184.80" y="212.00" width="0.80" height="1.60" rx="0" fill="#2a90e0" />
<rect x="272.00" y="201.50" width="5.30" height="7.70" rx="0.6" fill="#0b6fd0" /><rect x="278.70" y="201.50" width="5.30" height="3.30" rx="0.6" fill="#3ab8ee" /><rect x="272.00" y="210.30" width="5.30" height="3.30" rx="0.6" fill="#3ab8ee" /><rect x="278.70" y="206.00" width="5.30" height="7.60" rx="0.6" fill="#0b6fd0" />
<g transform="translate(564.00 201.60) scale(0.5000)"><path d="M0 19 Q0 11.5 6 11.5 Q12 11.5 12 19 Z" fill="#1f5c9e"/><path d="M20 19 Q20 11.5 26 11.5 Q32 11.5 32 19 Z" fill="#1f5c9e"/><ellipse cx="6.3" cy="6.2" rx="3.8" ry="4.6" fill="#f4bb3a"/><ellipse cx="25.9" cy="6.2" rx="3.8" ry="4.6" fill="#f4bb3a"/><path d="M2.6 5 Q3 0.6 6.4 0.8 Q10 0.8 10.1 5 Q8 3 6.3 3.4 Q4.3 3 2.6 5Z" fill="#c8661e"/><path d="M22.2 5 Q22.6 0.6 26 0.8 Q29.6 0.8 29.7 5 Q27.6 3 25.9 3.4 Q23.9 3 22.2 5Z" fill="#c8661e"/><path d="M8.8 23.3 L8.8 19 Q8.8 13.6 16 13.6 Q23.2 13.6 23.2 19 L23.2 23.3 Z" fill="#2aa6e8"/><ellipse cx="16.2" cy="8.3" rx="4.3" ry="5.3" fill="#f6c040"/><path d="M11.8 7 Q12 2 16.2 2 Q20.5 2 20.6 7 Q18.4 4.6 16.2 5 Q14 4.6 11.8 7Z" fill="#c8661e"/></g>
<path d="M655.8 213.6 L655.8 212 Q655.8 209.2 658.6 209.2 L664 209.2 L664 213.6 Z" fill="#2aa3e6"/>
<path d="M657.6 204.5 Q657.6 210.8 660.9 211.4 Q664.2 210.8 664.2 204.5 Z" fill="#f6c040"/>
<path d="M657.4 204.8 Q657.2 199.8 660.9 199.8 Q664.6 199.8 664.4 204.8 Z" fill="#1f7bd0"/>
<rect x="663.70" y="208.40" width="5.50" height="5.80" rx="0.5" fill="#f8c440" />
<rect x="756.90" y="203.10" width="12.50" height="10.50" rx="0.6" fill="url(#gbox)" /><rect x="756.70" y="201.40" width="12.90" height="2.00" rx="0.6" fill="#f4ae4c" /><rect x="765.00" y="210.50" width="2.80" height="1.00" rx="0" fill="#7a4a20" />
<path d="M839 206.5 L843.5 202.3 M853 206.5 L848.5 202.3" fill="none" stroke="#6f7478" stroke-width="1.5"/>
<rect x="838.20" y="206.20" width="15.60" height="2.40" rx="0.6" fill="#7b7f83" />
<rect x="839.20" y="208.00" width="5.80" height="4.90" rx="0.6" fill="#d94452" /><rect x="847.00" y="208.00" width="5.80" height="4.90" rx="0.6" fill="#2f7fd8" />
<rect x="936.50" y="202.30" width="10.70" height="11.30" rx="0.6" fill="url(#gyel)" /><rect x="940.30" y="202.30" width="3.10" height="1.70" rx="0" fill="#fde9b8" />
<path d="M942 206 H948.2" fill="none" stroke="#111" stroke-width="1.2"/><path d="M934 210.6 H938.4" fill="none" stroke="#111" stroke-width="1.2"/>
<rect x="40.90" y="234.00" width="4.10" height="24.30" rx="0" fill="#c3c3c3" /><rect x="31.10" y="244.10" width="23.70" height="4.10" rx="0" fill="#c3c3c3" />
<path d="M86.3 235.8 Q92 235.8 94.8 238.5 L94.8 246.3 L84.3 257.8 Q80 257.8 77.2 256.1 L77.2 248.3 L86.3 248.3 Z" fill="#ff8c00"/>
<rect x="71.90" y="232.60" width="12.30" height="12.60" rx="0" fill="#ffffff" stroke="#3d464c" stroke-width="1.7"/>
<rect x="70.90" y="231.60" width="15.10" height="14.60" rx="0" fill="none" stroke="#fff" stroke-width="0"/>
<path d="M75.5 236.7 L78.9 240.6 L86.6 231.2" fill="none" stroke="#138473" stroke-width="2"/>
<path d="M88.8 261.3 L101.5 248.6" fill="none" stroke="#fff" stroke-width="7.4"/>
<path d="M89 261 L101.2 248.8" fill="none" stroke="#1874d8" stroke-width="5"/>
<path d="M90.3 256 L94.1 259.8" fill="none" stroke="#fff" stroke-width="0.9"/>
<path d="M119.0 237.8 V252.3 Q119.0 256.3 129.0 256.3 Q139.0 256.3 139.0 252.3 V237.8 Z" fill="#ff8c00"/><ellipse cx="129.0" cy="237.8" rx="10" ry="6" fill="#ff8c00"/><path d="M119.0 240.0 Q129.0 247.4 139.0 240.0" fill="none" stroke="#fff" stroke-width="1.6"/><path d="M119.0 246.4 Q129.0 253.8 139.0 246.4" fill="none" stroke="#fff" stroke-width="1.6"/>
<path d="M134 248.8 L144.2 260 M144.2 248.8 L134 260" fill="none" stroke="#fff" stroke-width="5.2"/>
<path d="M134.6 249.4 L143.6 259.4 M143.6 249.4 L134.6 259.4" fill="none" stroke="#e24a5a" stroke-width="2.8"/>
<path d="M163.0 237.8 V252.3 Q163.0 256.3 173.0 256.3 Q183.0 256.3 183.0 252.3 V237.8 Z" fill="#ff8c00"/><ellipse cx="173.0" cy="237.8" rx="10" ry="6" fill="#ff8c00"/><path d="M163.0 240.0 Q173.0 247.4 183.0 240.0" fill="none" stroke="#fff" stroke-width="1.6"/><path d="M163.0 246.4 Q173.0 253.8 183.0 246.4" fill="none" stroke="#fff" stroke-width="1.6"/>
<circle cx="182.20" cy="255.60" r="8.20" fill="#fff" />
<path d="M176.8 254 A5.6 5.6 0 0 1 186.6 251.6" fill="none" stroke="#138473" stroke-width="2.1"/><path d="M188.4 248.2 L188.6 254 L183.2 253.2 Z" fill="#138473"/>
<path d="M187.6 257.2 A5.6 5.6 0 0 1 177.8 259.6" fill="none" stroke="#138473" stroke-width="2.1"/><path d="M176 263 L175.8 257.2 L181.2 258 Z" fill="#138473"/>
<path d="M218 231.6 L246 260.6 M246 231.6 L218 260.6" fill="none" stroke="#e24a5a" stroke-width="5.8"/>
<rect x="281.20" y="237.90" width="27.70" height="16.30" rx="0.8" fill="#138473" />
<path d="M287 239.9 H303.1 A3.9 3.9 0 0 0 307 243.8 V248.4 A3.9 3.9 0 0 0 303.1 252.3 H287 A3.9 3.9 0 0 0 283.1 248.4 V243.8 A3.9 3.9 0 0 0 287 239.9 Z" fill="#fff"/>
<circle cx="294.90" cy="246.10" r="3.90" fill="#138473" />
<rect x="344.10" y="232.00" width="29.80" height="26.30" rx="0.6" fill="#464d52" />
<rect x="345.90" y="236.00" width="26.20" height="20.50" rx="0" fill="#ffffff" />
<rect x="348.20" y="238.10" width="3.60" height="3.60" rx="0" fill="#a9a9a9" />
<rect x="348.20" y="244.20" width="3.60" height="3.60" rx="0" fill="#a9a9a9" />
<rect x="348.20" y="250.20" width="3.60" height="3.60" rx="0" fill="#a9a9a9" />
<rect x="354.20" y="238.10" width="3.60" height="3.60" rx="0" fill="#a9a9a9" />
<rect x="354.20" y="244.20" width="3.60" height="3.60" rx="0" fill="#e23c4c" />
<rect x="354.20" y="250.20" width="3.60" height="3.60" rx="0" fill="#a9a9a9" />
<rect x="360.10" y="238.10" width="3.60" height="3.60" rx="0" fill="#a9a9a9" />
<rect x="360.10" y="244.20" width="3.60" height="3.60" rx="0" fill="#a9a9a9" />
<rect x="360.10" y="250.20" width="3.60" height="3.60" rx="0" fill="#a9a9a9" />
<rect x="366.20" y="238.10" width="3.60" height="3.60" rx="0" fill="#a9a9a9" />
<rect x="366.20" y="244.20" width="3.60" height="3.60" rx="0" fill="#a9a9a9" />
<rect x="366.20" y="250.20" width="3.60" height="3.60" rx="0" fill="#a9a9a9" />
<rect x="426.10" y="232.00" width="25.80" height="5.90" rx="0.5" fill="#ff8c00" /><rect x="426.10" y="240.10" width="25.80" height="18.20" rx="0.5" fill="#ff8c00" />
<circle cx="448.90" cy="255.10" r="7.90" fill="#138473" stroke="#fff" stroke-width="1.4"/>
<path d="M444.6 255.1 H453.2 M448.9 250.8 V259.4" fill="none" stroke="#fff" stroke-width="1.9"/>
<rect x="488.00" y="426.00" width="9.00" height="4.00" rx="0.5" fill="#9a9ea2" />
<path d="M543.20 431.7 L544.40 424.9 L545.60 431.7 M543.70 429.4 H545.10" fill="none" stroke="#3a3a3a" stroke-width="0.9"/><rect x="547.10" y="422.30" width="7.00" height="11.30" rx="0.6" fill="#138473" /><path d="M549.20 425.2 V431.3 H552.00 V428.2 H549.20 M549.20 425.2 H551.60 V428.2" fill="none" stroke="#ffffff" stroke-width="0.9"/><path d="M558.20 425.4 Q555.30 424.6 555.30 428.3 Q555.30 432 558.20 431.2" fill="none" stroke="#3a3a3a" stroke-width="0.9"/>
<path d="M742.00 431.7 L743.20 424.9 L744.40 431.7 M742.50 429.4 H743.90" fill="none" stroke="#3a3a3a" stroke-width="0.9"/><rect x="745.90" y="422.30" width="7.00" height="11.30" rx="0.6" fill="#138473" /><path d="M748.00 425.2 V431.3 H750.80 V428.2 H748.00 M748.00 425.2 H750.40 V428.2" fill="none" stroke="#ffffff" stroke-width="0.9"/><path d="M757.00 425.4 Q754.10 424.6 754.10 428.3 Q754.10 432 757.00 431.2" fill="none" stroke="#3a3a3a" stroke-width="0.9"/>
<path d="M821.80 431.7 L823.00 424.9 L824.20 431.7 M822.30 429.4 H823.70" fill="none" stroke="#3a3a3a" stroke-width="0.9"/><rect x="825.70" y="422.30" width="7.00" height="11.30" rx="0.6" fill="#138473" /><path d="M827.80 425.2 V431.3 H830.60 V428.2 H827.80 M827.80 425.2 H830.20 V428.2" fill="none" stroke="#ffffff" stroke-width="0.9"/><path d="M836.80 425.4 Q833.90 424.6 833.90 428.3 Q833.90 432 836.80 431.2" fill="none" stroke="#3a3a3a" stroke-width="0.9"/>
<path d="M915.90 431.7 L917.10 424.9 L918.30 431.7 M916.40 429.4 H917.80" fill="none" stroke="#3a3a3a" stroke-width="0.9"/><rect x="919.80" y="422.30" width="7.00" height="11.30" rx="0.6" fill="#138473" /><path d="M921.90 425.2 V431.3 H924.70 V428.2 H921.90 M921.90 425.2 H924.30 V428.2" fill="none" stroke="#ffffff" stroke-width="0.9"/><path d="M930.90 425.4 Q928.00 424.6 928.00 428.3 Q928.00 432 930.90 431.2" fill="none" stroke="#3a3a3a" stroke-width="0.9"/>
<path d="M1011.50 431.7 L1012.70 424.9 L1013.90 431.7 M1012.00 429.4 H1013.40" fill="none" stroke="#3a3a3a" stroke-width="0.9"/><rect x="1015.40" y="422.30" width="7.00" height="11.30" rx="0.6" fill="#138473" /><path d="M1017.50 425.2 V431.3 H1020.30 V428.2 H1017.50 M1017.50 425.2 H1019.90 V428.2" fill="none" stroke="#ffffff" stroke-width="0.9"/><path d="M1026.50 425.4 Q1023.60 424.6 1023.60 428.3 Q1023.60 432 1026.50 431.2" fill="none" stroke="#3a3a3a" stroke-width="0.9"/>
<path d="M1089.90 431.7 L1091.10 424.9 L1092.30 431.7 M1090.40 429.4 H1091.80" fill="none" stroke="#3a3a3a" stroke-width="0.9"/><rect x="1093.80" y="422.30" width="7.00" height="11.30" rx="0.6" fill="#138473" /><path d="M1095.90 425.2 V431.3 H1098.70 V428.2 H1095.90 M1095.90 425.2 H1098.30 V428.2" fill="none" stroke="#ffffff" stroke-width="0.9"/><path d="M1104.90 425.4 Q1102.00 424.6 1102.00 428.3 Q1102.00 432 1104.90 431.2" fill="none" stroke="#3a3a3a" stroke-width="0.9"/>
<path d="M1180.60 431.7 L1181.80 424.9 L1183.00 431.7 M1181.10 429.4 H1182.50" fill="none" stroke="#3a3a3a" stroke-width="0.9"/><rect x="1184.50" y="422.30" width="7.00" height="11.30" rx="0.6" fill="#138473" /><path d="M1186.60 425.2 V431.3 H1189.40 V428.2 H1186.60 M1186.60 425.2 H1189.00 V428.2" fill="none" stroke="#ffffff" stroke-width="0.9"/><path d="M1195.60 425.4 Q1192.70 424.6 1192.70 428.3 Q1192.70 432 1195.60 431.2" fill="none" stroke="#3a3a3a" stroke-width="0.9"/>
<path d="M1259.70 431.7 L1260.90 424.9 L1262.10 431.7 M1260.20 429.4 H1261.60" fill="none" stroke="#3a3a3a" stroke-width="0.9"/><rect x="1263.60" y="422.30" width="7.00" height="11.30" rx="0.6" fill="#138473" /><path d="M1265.70 425.2 V431.3 H1268.50 V428.2 H1265.70 M1265.70 425.2 H1268.10 V428.2" fill="none" stroke="#ffffff" stroke-width="0.9"/><path d="M1274.70 425.4 Q1271.80 424.6 1271.80 428.3 Q1271.80 432 1274.70 431.2" fill="none" stroke="#3a3a3a" stroke-width="0.9"/>
<path d="M1334.10 431.7 L1335.30 424.9 L1336.50 431.7 M1334.60 429.4 H1336.00" fill="none" stroke="#3a3a3a" stroke-width="0.9"/><rect x="1338.00" y="422.30" width="7.00" height="11.30" rx="0.6" fill="#138473" /><path d="M1340.10 425.2 V431.3 H1342.90 V428.2 H1340.10 M1340.10 425.2 H1342.50 V428.2" fill="none" stroke="#ffffff" stroke-width="0.9"/><path d="M1349.10 425.4 Q1346.20 424.6 1346.20 428.3 Q1346.20 432 1349.10 431.2" fill="none" stroke="#3a3a3a" stroke-width="0.9"/>
<rect x="490.30" y="452.80" width="8.30" height="8.50" rx="0.6" fill="#fff" stroke="#c9c9c9" stroke-width="0.9"/>
<path d="M492.2 457.0 H496.7 M494.45 454.8 V459.3" fill="none" stroke="#b0b0b0" stroke-width="0.8"/>
<circle cx="518.80" cy="457.20" r="9.10" fill="#0e6fd0" />
<circle cx="518.80" cy="452.00" r="1.45" fill="#fff" />
<path d="M516.6 454.6 H519.9 V461.5 H521.3 V462.8 H516.3 V461.5 H517.5 V455.9 H516.6 Z" fill="#fff"/>
<rect x="490.30" y="482.66" width="8.30" height="8.50" rx="0.6" fill="none" stroke="#c9c9c9" stroke-width="0.9"/>
<path d="M492.2 486.9 H496.7 M494.45 484.7 V489.2" fill="none" stroke="#b0b0b0" stroke-width="0.8"/>
<circle cx="518.80" cy="487.06" r="9.10" fill="#0e6fd0" />
<circle cx="518.80" cy="481.86" r="1.45" fill="#fff" />
<path d="M516.6 484.5 H519.9 V491.4 H521.3 V492.7 H516.3 V491.4 H517.5 V485.8 H516.6 Z" fill="#fff"/>
<rect x="490.30" y="512.52" width="8.30" height="8.50" rx="0.6" fill="#fff" stroke="#c9c9c9" stroke-width="0.9"/>
<path d="M492.2 516.8 H496.7 M494.45 514.5 V519.0" fill="none" stroke="#b0b0b0" stroke-width="0.8"/>
<circle cx="518.80" cy="516.92" r="9.10" fill="#0e6fd0" />
<circle cx="518.80" cy="511.72" r="1.45" fill="#fff" />
<path d="M516.6 514.3 H519.9 V521.2 H521.3 V522.5 H516.3 V521.2 H517.5 V515.6 H516.6 Z" fill="#fff"/>
<rect x="490.30" y="542.38" width="8.30" height="8.50" rx="0.6" fill="#fff" stroke="#c9c9c9" stroke-width="0.9"/>
<path d="M492.2 546.6 H496.7 M494.45 544.4 V548.9" fill="none" stroke="#b0b0b0" stroke-width="0.8"/>
<circle cx="518.80" cy="546.78" r="9.10" fill="#0e6fd0" />
<circle cx="518.80" cy="541.58" r="1.45" fill="#fff" />
<path d="M516.6 544.2 H519.9 V551.1 H521.3 V552.4 H516.3 V551.1 H517.5 V545.5 H516.6 Z" fill="#fff"/>
<rect x="490.30" y="572.24" width="8.30" height="8.50" rx="0.6" fill="#fff" stroke="#c9c9c9" stroke-width="0.9"/>
<path d="M492.2 576.5 H496.7 M494.45 574.2 V578.7" fill="none" stroke="#b0b0b0" stroke-width="0.8"/>
<circle cx="518.80" cy="576.64" r="9.10" fill="#0e6fd0" />
<circle cx="518.80" cy="571.44" r="1.45" fill="#fff" />
<path d="M516.6 574.0 H519.9 V580.9 H521.3 V582.2 H516.3 V580.9 H517.5 V575.3 H516.6 Z" fill="#fff"/>
<path d="M617.6 860.4 L617.6 877.6 L621.6 873.8 L624.4 879.9 L626.7 879 L624.1 873.1 L628.8 873.1 Z" fill="#fff" stroke="#111" stroke-width="1.1" stroke-linejoin="round"/></svg>
</body></html>
